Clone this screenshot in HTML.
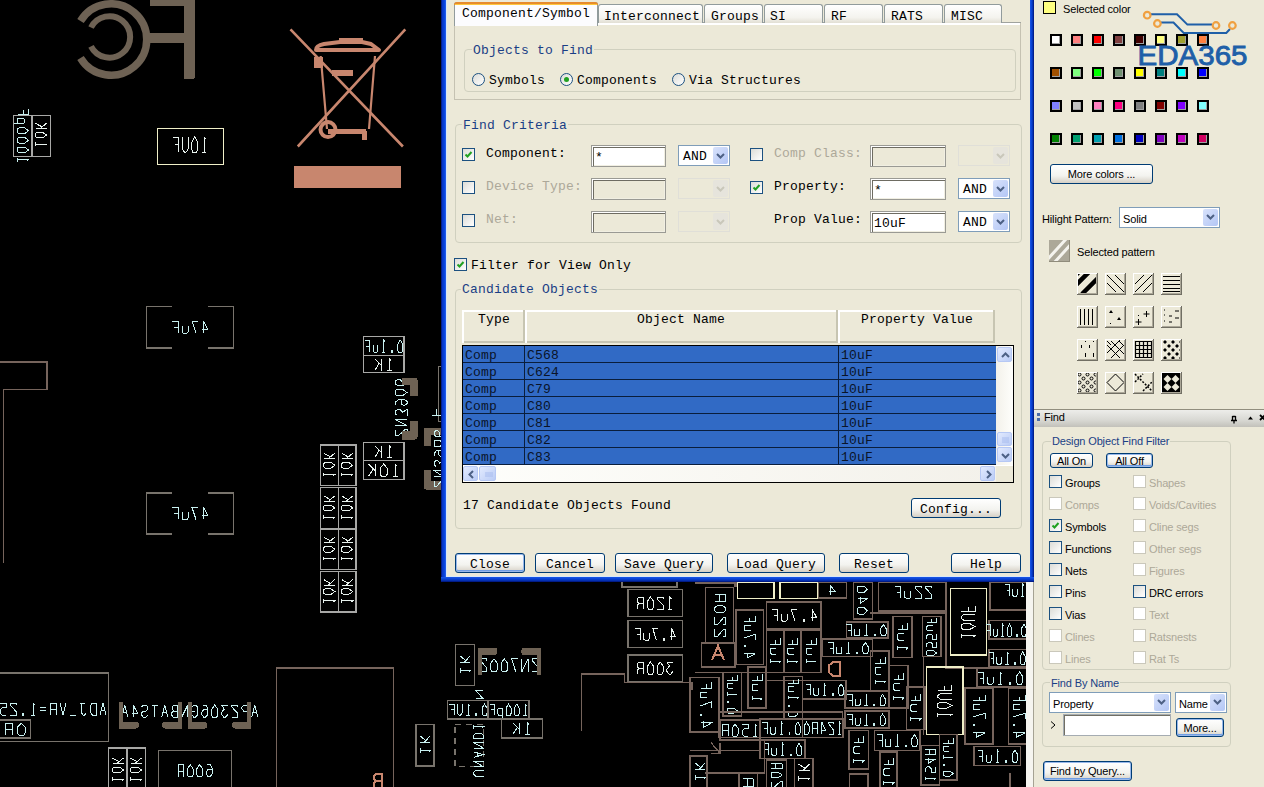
<!DOCTYPE html>
<html><head><meta charset="utf-8">
<style>
*{margin:0;padding:0;box-sizing:border-box}
html,body{width:1264px;height:787px;overflow:hidden;background:#000}
body{position:relative;font-family:"Liberation Mono",monospace}
.a{position:absolute}
#pcb{position:absolute;left:0;top:0;width:1026px;height:787px;background:#000;overflow:hidden}
#dlg{position:absolute;left:441px;top:-30px;width:593px;height:612px;background:#0A3ED6}
#dlgin{position:absolute;left:446px;top:0;width:584px;height:577px;background:#ECE9D8}
.m{font-family:"Liberation Mono",monospace;font-size:13px;color:#000;white-space:pre;line-height:13px;letter-spacing:0.2px}
.s{font-family:"Liberation Sans",sans-serif;font-size:11px;color:#000;white-space:pre;line-height:11px;letter-spacing:-0.15px;margin-top:1px}
.btn .s{margin-top:0}
.tab{position:absolute;top:4px;height:19px;border:1px solid #919B9C;border-bottom:none;border-radius:3px 3px 0 0;background:linear-gradient(#fff,#F4F3EE 70%,#E2DFD4)}
.tab span{position:absolute}
.grp{position:absolute;border:1px solid #D0D0BF;border-radius:4px}
.gt{color:#1A3E85;background:#ECE9D8;padding:0 1px}
.cb{position:absolute;width:13px;height:13px;border:1px solid #1C5180;background:linear-gradient(135deg,#DCDCD7,#fff)}
.tb{position:absolute;border:1px solid #9A9A94;background:#fff;box-shadow:inset 1px 1px 0 #fff,inset 2px 2px 0 #6E6C62,inset -1px -1px 0 #F1EFE2}
.tbd{background:#ECE9D8}
.cmb{position:absolute;border:1px solid #7F9DB9;background:#fff}
.cmbd{border-color:#E0DFD8;background:#ECE9D8}
.cmb .ar{position:absolute;right:1px;top:1px;width:15px;height:17px;background:linear-gradient(135deg,#D8E2FB,#B3C6F5);border-radius:2px}
.cmb .ard{background:#E6E4DC}
.btn{position:absolute;border:1px solid #003C74;border-radius:3px;background:linear-gradient(#fff,#F3F3EF 60%,#D6D0C5)}
.btn span{position:absolute;left:0;right:0;text-align:center}
.rad{width:13px;height:13px;border:1px solid #1C5180;border-radius:50%;background:linear-gradient(135deg,#DCDCD7,#fff)}
.rad i{position:absolute;left:3px;top:3px;width:5px;height:5px;border-radius:50%;background:#21A121}
.sbb{border-radius:2px;background:linear-gradient(135deg,#E2EAFE,#BACCF6);border:1px solid #B6C8F4}
.rt{color:#0A1428}
#panel{position:absolute;left:1034px;top:0;width:230px;height:787px;background:#ECE9D8}
.sw{position:absolute;width:12px;height:12px;border:2px solid #000}
.sw i{position:absolute;right:0;bottom:0;width:1.5px;height:100%;background:#A0A0A0}
.sw b{position:absolute;left:0;bottom:0;width:100%;height:1.5px;background:#A0A0A0}
.pat{position:absolute;width:21px;height:22px;border:1px solid;border-color:#fff #ACA899 #ACA899 #fff;box-shadow:1px 1px 0 #716F64}
.sgt{color:#1A3E85;background:#ECE9D8;padding:0 1px}
</style></head><body>
<div id="pcb"><svg width="1026" height="787" style="position:absolute;left:0;top:0" font-family="Liberation Sans" shape-rendering="crispEdges">
<g stroke="#6E6254" fill="none" shape-rendering="auto">
<path d="M80.5 21 A35.7 35.7 0 1 1 80.5 58" stroke-width="7.5"/>
<path d="M91 27.5 A20.7 20.7 0 1 1 91 46.3" stroke-width="6"/>
</g>
<g fill="#6E6254"><rect x="184" y="-2" width="11" height="81" rx="2"/><rect x="150.4" y="-2" width="42" height="8.3"/><rect x="150.4" y="32.6" width="42" height="10.3"/><circle cx="189" cy="37.7" r="5.5"/><circle cx="189" cy="2" r="5"/></g>
<g stroke="#C8866E" fill="none" shape-rendering="auto">
<path d="M290.5 29.3 L402.9 146.5 M405.3 29.3 L297.8 146.5" stroke-width="2.6"/>
<path d="M320.7 56 L327 129 M375 56 L369 129" stroke-width="2.2"/>
<path d="M328 131.5 H366" stroke-width="5"/>
<circle cx="328" cy="129.6" r="7.5" stroke-width="4"/>
<path d="M316 50 Q316 45.5 324 44 L340 42 H362 L371 44 L379 50 Z" stroke-width="4" stroke-linejoin="round"/>
</g>
<g fill="#C8866E"><rect x="338.8" y="37.8" width="24.2" height="5"/><rect x="313.5" y="57" width="9" height="11"/><rect x="331.6" y="70.4" width="21.7" height="6"/><rect x="361.8" y="131" width="5" height="9.4"/><rect x="294.2" y="165.8" width="106.7" height="21.7"/></g>
<rect x="13.7" y="115.6" width="36.599999999999994" height="41.20000000000002" stroke="#A8A8A6" stroke-width="1.3" fill="none"/>
<path d="M32 115.6 V156.8" stroke="#A8A8A6" stroke-width="1.3" fill="none"/>
<path transform="translate(23,135.5) rotate(90) scale(-1,1) translate(-27.0,-5.5)" d="M1.4 1.7L2.9 0L2.9 11M1 11L4.8 11M12.5 0L15.4 3.9L15.4 9.4L14.5 11L10.6 11L9.6 9.4L9.6 3.9ZM22.2 0L25.1 3.9L25.1 9.4L24.1 11L20.2 11L19.3 9.4L19.3 3.9ZM31.8 0L34.7 3.9L34.7 9.4L33.8 11L29.9 11L28.9 9.4L28.9 3.9ZM38.6 4.4L38.6 14.3M38.6 5.5L39.5 4.4L43.4 4.4L44.4 5.5L44.4 9.9L43.4 11L39.5 11L38.6 9.9M54 0L48.2 0L48.2 11M48.2 5.5L52.1 5.5" stroke="#C8F0F0" stroke-width="1" fill="none"/>
<path transform="translate(41,135) rotate(90) scale(-1,1) translate(-11.8,-5.5)" d="M1.4 1.7L2.7 0L2.7 11M0.9 11L4.5 11M11.8 0L14.5 3.9L14.5 9.4L13.6 11L9.9 11L9 9.4L9 3.9ZM18.1 0L18.1 11M23.5 0L18.1 6.6M19.9 4.4L23.5 11" stroke="#E8F2EE" stroke-width="1" fill="none"/>
<rect x="157.4" y="128.6" width="66.4" height="35.70000000000002" stroke="#F0EFC8" stroke-width="1.2" fill="none"/>
<path transform="translate(190,144.5) scale(-1,1) translate(-17.0,-7.5)" d="M1.4 2.2L2.8 0L2.8 15M0.9 15L4.7 15M12.3 0L15.1 5.2L15.1 12.8L14.2 15L10.4 15L9.4 12.8L9.4 5.2ZM18.9 0L18.9 12L20.8 15L22.7 15L24.6 12L24.6 0M34 0L28.3 0L28.3 15M28.3 7.5L32.1 7.5" stroke="#E8F2EE" stroke-width="1" fill="none"/>
<path d="M172 306.7 H146.7 V347.9 H172 M208 306.7 H233.4 V347.9 H208" stroke="#78736C" stroke-width="1.5" fill="none"/>
<path transform="translate(190,327.29999999999995) scale(-1,1) translate(-18.0,-6.0)" d="M4.5 12L4.5 0L0 8.4L6 8.4M10 0L16 0L12 12M20 4.8L20 10.8L21 12L25 12L26 10.8M26 4.8L26 12M36 0L30 0L30 12M30 6L34 6" stroke="#C8F0F0" stroke-width="1" fill="none"/>
<path d="M172 492.8 H146.7 V534.0 H172 M208 492.8 H233.4 V534.0 H208" stroke="#78736C" stroke-width="1.5" fill="none"/>
<path transform="translate(190,513.4) scale(-1,1) translate(-18.0,-6.0)" d="M4.5 12L4.5 0L0 8.4L6 8.4M10 0L16 0L12 12M20 4.8L20 10.8L21 12L25 12L26 10.8M26 4.8L26 12M36 0L30 0L30 12M30 6L34 6" stroke="#C8F0F0" stroke-width="1" fill="none"/>
<path d="M0 361.9 H47 V389.6 H3.6 V563" stroke="#76645C" stroke-width="1.5" fill="none"/>
<rect x="363.4" y="336.6" width="40.60000000000002" height="35.799999999999955" stroke="#A8A8A6" stroke-width="1.3" fill="none"/>
<path d="M363.4 355.8 H404" stroke="#A8A8A6" stroke-width="1.3" fill="none"/>
<path transform="translate(383.7,346) scale(-1,1) translate(-19.0,-6.0)" d="M2.5 0L5 4.2L5 10.2L4.1 12L0.8 12L0 10.2L0 4.2ZM10.3 10.8L11.2 10.8L11.2 12L10.3 12ZM17.8 1.8L19 0L19 12M17.3 12L20.7 12M24.8 4.8L24.8 10.8L25.6 12L28.9 12L29.7 10.8M29.7 4.8L29.7 12M38 0L33 0L33 12M33 6L36.3 6" stroke="#C8F0F0" stroke-width="1" fill="none"/>
<path transform="translate(383.7,364.5) scale(-1,1) translate(-9.0,-6.0)" d="M1.7 1.8L3.4 0L3.4 12M1.1 12L5.6 12M11.2 0L11.2 12M18 0L11.2 7.2M13.5 4.8L18 12" stroke="#E8F2EE" stroke-width="1" fill="none"/>
<rect x="363.4" y="442.4" width="40.60000000000002" height="36.80000000000001" stroke="#A8A8A6" stroke-width="1.3" fill="none"/>
<path d="M363.4 460.8 H404" stroke="#A8A8A6" stroke-width="1.3" fill="none"/>
<path transform="translate(383.7,451.5) scale(-1,1) translate(-9.0,-6.0)" d="M1.7 1.8L3.4 0L3.4 12M1.1 12L5.6 12M11.2 0L11.2 12M18 0L11.2 7.2M13.5 4.8L18 12" stroke="#E8F2EE" stroke-width="1" fill="none"/>
<path transform="translate(383.7,470) scale(-1,1) translate(-15.0,-6.0)" d="M1.7 1.8L3.5 0L3.5 12M1.2 12L5.8 12M15 0L18.5 4.2L18.5 10.2L17.3 12L12.7 12L11.5 10.2L11.5 4.2ZM23.1 0L23.1 12M30 0L23.1 7.2M25.4 4.8L30 12" stroke="#E8F2EE" stroke-width="1" fill="none"/>
<path transform="translate(401,407.5) rotate(90) scale(-1,1) translate(-28.0,-6.0)" d="M0 2.4L0 0L6 0L6 1.8L0 8.4L0 12L6 12M10 12L10 0L16 12L16 0M20 0L26 0L23 4.8L24 4.8L26 7.2L26 9.6L24 12L22 12L20 9.6M36 6L32 6L30 3.6L30 2.4L32 0L34 0L36 2.4L36 8.4L33 12L31 12M43 0L46 4.2L46 10.2L45 12L41 12L40 10.2L40 4.2ZM55 0L52 0L50 3.6L50 9.6L52 12L54 12L56 9.6L56 7.2L54 4.8L50 4.8" stroke="#C8F0F0" stroke-width="1" fill="none"/>
<g fill="#6E6254"><path d="M402 377.5 H415 Q417.5 377.5 417.5 380 V396 H410 V385 H402 Z"/><path d="M402 439.5 H415 Q417.5 439.5 417.5 437 V420.5 H410 V431 H402 Z"/><path d="M441 427.5 H426 Q423.5 427.5 423.5 430 V445.5 H431 V435 H441 Z"/><path d="M441 489.5 H426 Q423.5 489.5 423.5 487 V470 H431 V481 H441 Z"/></g>
<path transform="translate(438.5,458.5) rotate(90) scale(-1,1) translate(-28.0,-4.5)" d="M0 1.8L0 0L6 0L6 1.4L0 6.3L0 9L6 9M10 9L10 0L16 9L16 0M20 0L26 0L23 3.6L24 3.6L26 5.4L26 7.2L24 9L22 9L20 7.2M36 4.5L32 4.5L30 2.7L30 1.8L32 0L34 0L36 1.8L36 6.3L33 9L31 9M43 0L46 3.1L46 7.7L45 9L41 9L40 7.7L40 3.1ZM55 0L52 0L50 2.7L50 7.2L52 9L54 9L56 7.2L56 5.4L54 3.6L50 3.6" stroke="#C8F0F0" stroke-width="1" fill="none"/>
<rect x="438.7" y="366.4" width="13.300000000000011" height="54.900000000000034" stroke="#78736C" stroke-width="1.3" fill="none"/>
<path transform="translate(436.5,410.5) rotate(90) scale(-1,1) translate(-5.0,-4.5)" d="M10 0L0 0L0 9M0 4.5L6.7 4.5" stroke="#C8F0F0" stroke-width="1" fill="none"/>
<rect x="320.3" y="445" width="35.69999999999999" height="40.5" stroke="#A8A8A6" stroke-width="1.3" fill="none"/>
<path d="M338.2 445 V485.5" stroke="#A8A8A6" stroke-width="1.3" fill="none"/>
<path transform="translate(329.3,465.25) rotate(90) scale(-1,1) translate(-12.0,-5.5)" d="M1.4 1.7L2.8 0L2.8 11M0.9 11L4.6 11M12 0L14.8 3.9L14.8 9.4L13.8 11L10.2 11L9.2 9.4L9.2 3.9ZM18.5 0L18.5 11M24 0L18.5 6.6M20.3 4.4L24 11" stroke="#E8F2EE" stroke-width="1" fill="none"/>
<path transform="translate(347.2,465.25) rotate(90) scale(-1,1) translate(-12.0,-5.5)" d="M1.4 1.7L2.8 0L2.8 11M0.9 11L4.6 11M12 0L14.8 3.9L14.8 9.4L13.8 11L10.2 11L9.2 9.4L9.2 3.9ZM18.5 0L18.5 11M24 0L18.5 6.6M20.3 4.4L24 11" stroke="#E8F2EE" stroke-width="1" fill="none"/>
<rect x="320.3" y="487.7" width="35.69999999999999" height="40.50000000000006" stroke="#A8A8A6" stroke-width="1.3" fill="none"/>
<path d="M338.2 487.7 V528.2" stroke="#A8A8A6" stroke-width="1.3" fill="none"/>
<path transform="translate(329.3,507.95000000000005) rotate(90) scale(-1,1) translate(-12.0,-5.5)" d="M1.4 1.7L2.8 0L2.8 11M0.9 11L4.6 11M12 0L14.8 3.9L14.8 9.4L13.8 11L10.2 11L9.2 9.4L9.2 3.9ZM18.5 0L18.5 11M24 0L18.5 6.6M20.3 4.4L24 11" stroke="#E8F2EE" stroke-width="1" fill="none"/>
<path transform="translate(347.2,507.95000000000005) rotate(90) scale(-1,1) translate(-12.0,-5.5)" d="M1.4 1.7L2.8 0L2.8 11M0.9 11L4.6 11M12 0L14.8 3.9L14.8 9.4L13.8 11L10.2 11L9.2 9.4L9.2 3.9ZM18.5 0L18.5 11M24 0L18.5 6.6M20.3 4.4L24 11" stroke="#E8F2EE" stroke-width="1" fill="none"/>
<rect x="320.3" y="529" width="35.69999999999999" height="40.5" stroke="#A8A8A6" stroke-width="1.3" fill="none"/>
<path d="M338.2 529 V569.5" stroke="#A8A8A6" stroke-width="1.3" fill="none"/>
<path transform="translate(329.3,549.25) rotate(90) scale(-1,1) translate(-12.0,-5.5)" d="M1.4 1.7L2.8 0L2.8 11M0.9 11L4.6 11M12 0L14.8 3.9L14.8 9.4L13.8 11L10.2 11L9.2 9.4L9.2 3.9ZM18.5 0L18.5 11M24 0L18.5 6.6M20.3 4.4L24 11" stroke="#E8F2EE" stroke-width="1" fill="none"/>
<path transform="translate(347.2,549.25) rotate(90) scale(-1,1) translate(-12.0,-5.5)" d="M1.4 1.7L2.8 0L2.8 11M0.9 11L4.6 11M12 0L14.8 3.9L14.8 9.4L13.8 11L10.2 11L9.2 9.4L9.2 3.9ZM18.5 0L18.5 11M24 0L18.5 6.6M20.3 4.4L24 11" stroke="#E8F2EE" stroke-width="1" fill="none"/>
<rect x="320.3" y="571.3" width="35.69999999999999" height="40.60000000000002" stroke="#A8A8A6" stroke-width="1.3" fill="none"/>
<path d="M338.2 571.3 V611.9" stroke="#A8A8A6" stroke-width="1.3" fill="none"/>
<path transform="translate(329.3,591.5999999999999) rotate(90) scale(-1,1) translate(-12.0,-5.5)" d="M1.4 1.7L2.8 0L2.8 11M0.9 11L4.6 11M12 0L14.8 3.9L14.8 9.4L13.8 11L10.2 11L9.2 9.4L9.2 3.9ZM18.5 0L18.5 11M24 0L18.5 6.6M20.3 4.4L24 11" stroke="#E8F2EE" stroke-width="1" fill="none"/>
<path transform="translate(347.2,591.5999999999999) rotate(90) scale(-1,1) translate(-12.0,-5.5)" d="M1.4 1.7L2.8 0L2.8 11M0.9 11L4.6 11M12 0L14.8 3.9L14.8 9.4L13.8 11L10.2 11L9.2 9.4L9.2 3.9ZM18.5 0L18.5 11M24 0L18.5 6.6M20.3 4.4L24 11" stroke="#E8F2EE" stroke-width="1" fill="none"/>
<rect x="-2" y="673" width="110.6" height="68.70000000000005" stroke="#78736C" stroke-width="1.5" fill="none"/>
<path transform="translate(53,709) scale(-1,1) translate(-53.0,-6.0)" d="M0 12L3 0L6 12M1 7.8L5 7.8M10 0L10 12L13.5 12L16 9L16 3L13.5 0ZM21 0L26 0M24.5 0L24.5 9.6L23 12L21.5 12L20 10.2M30 12L36 12M40 0L43 12L46 0M50 12L50 0L55 0L56 1.2L56 5.4L55 6.6L50 6.6M55 6.6L56 7.8L56 12M60 4.2L66 4.2M60 7.8L66 7.8M71.5 1.8L73 0L73 12M71 12L75 12M82.5 10.8L83.5 10.8L83.5 12L82.5 12ZM90 2.4L90 0L96 0L96 1.8L90 8.4L90 12L96 12M106 0L100 0L100 4.8L104 4.8L106 7.2L106 9.6L104 12L100 12" stroke="#C8F0F0" stroke-width="1" fill="none"/>
<rect x="-2" y="720" width="32.3" height="18.200000000000045" stroke="#78736C" stroke-width="1.5" fill="none"/>
<path transform="translate(15,729) scale(-1,1) translate(-10.0,-6.0)" d="M3.8 0L7.5 4.2L7.5 10.2L6.2 12L1.2 12L0 10.2L0 4.2ZM12.5 12L12.5 0L18.8 0L20 1.2L20 5.4L18.8 6.6L12.5 6.6M18.8 6.6L20 7.8L20 12" stroke="#C8F0F0" stroke-width="1" fill="none"/>
<path transform="translate(189.7,711) scale(-1,1) translate(-68.0,-6.0)" d="M0 12L3 0L6 12M1 7.8L5 7.8M10 12L10 0L14 0L16 2.4L16 3.6L14 6L10 6M20 2.4L20 0L26 0L26 1.8L20 8.4L20 12L26 12M30 0L36 0L33 4.8L34 4.8L36 7.2L36 9.6L34 12L32 12L30 9.6M43 0L46 4.2L46 10.2L45 12L41 12L40 10.2L40 4.2ZM55 0L52 0L50 3.6L50 9.6L52 12L54 12L56 9.6L56 7.2L54 4.8L50 4.8M66 2.4L64 0L62 0L60 2.4L60 9.6L62 12L64 12L66 9.6L66 6L63 6M70 12L70 0L76 12L76 0M80 12L80 0L84 0L85.5 1.8L85.5 4.2L84 6L80 6M84 6L86 7.8L86 10.2L84.5 12L80 12M90 12L93 0L96 12M91 7.8L95 7.8M100 0L106 0M103 0L103 12M116 1.8L114.5 0L111.5 0L110 1.8L110 4.2L111.5 6L114.5 6L116 7.8L116 10.2L114.5 12L111.5 12L110 10.2M124.5 12L124.5 0L120 8.4L126 8.4M130 12L133 0L136 12M131 7.8L135 7.8" stroke="#C8F0F0" stroke-width="1" fill="none"/>
<g fill="#6E6254"><path d="M118.5 701.5 H122.5 V722 H136 Q139 722 139 725.2 Q139 728.5 136 728.5 H118.5 Z"/><path d="M181.5 701.5 H177.5 V722 H165 Q162 722 162 725.2 Q162 728.5 165 728.5 H181.5 Z"/><path d="M188 701.5 H192 V722 H204.5 Q207.5 722 207.5 725.2 Q207.5 728.5 204.5 728.5 H188 Z"/><path d="M251 701.5 H247 V722 H235 Q232 722 232 725.2 Q232 728.5 235 728.5 H251 Z"/></g>
<rect x="108.6" y="748" width="36.900000000000006" height="42" stroke="#A8A8A6" stroke-width="1.3" fill="none"/>
<path d="M127 748 V790" stroke="#A8A8A6" stroke-width="1.3" fill="none"/>
<path transform="translate(118,770) rotate(90) scale(-1,1) translate(-12.0,-5.5)" d="M1.4 1.7L2.8 0L2.8 11M0.9 11L4.6 11M12 0L14.8 3.9L14.8 9.4L13.8 11L10.2 11L9.2 9.4L9.2 3.9ZM18.5 0L18.5 11M24 0L18.5 6.6M20.3 4.4L24 11" stroke="#E8F2EE" stroke-width="1" fill="none"/>
<path transform="translate(136,770) rotate(90) scale(-1,1) translate(-12.0,-5.5)" d="M1.4 1.7L2.8 0L2.8 11M0.9 11L4.6 11M12 0L14.8 3.9L14.8 9.4L13.8 11L10.2 11L9.2 9.4L9.2 3.9ZM18.5 0L18.5 11M24 0L18.5 6.6M20.3 4.4L24 11" stroke="#E8F2EE" stroke-width="1" fill="none"/>
<rect x="158.4" y="750.7" width="73.1" height="39.299999999999955" stroke="#78736C" stroke-width="1.5" fill="none"/>
<path transform="translate(195,770.6) scale(-1,1) translate(-17.0,-6.0)" d="M4.7 0L1.9 0L0 3.6L0 9.6L1.9 12L3.8 12L5.7 9.6L5.7 7.2L3.8 4.8L0 4.8M12.3 0L15.1 4.2L15.1 10.2L14.2 12L10.4 12L9.4 10.2L9.4 4.2ZM21.7 0L24.6 4.2L24.6 10.2L23.6 12L19.8 12L18.9 10.2L18.9 4.2ZM28.3 12L28.3 0L33.1 0L34 1.2L34 5.4L33.1 6.6L28.3 6.6M33.1 6.6L34 7.8L34 12" stroke="#C8F0F0" stroke-width="1" fill="none"/>
<rect x="276.7" y="668" width="116.60000000000002" height="122" stroke="#76645C" stroke-width="1.5" fill="none"/>
<path transform="translate(377.5,781) scale(-1,1) translate(-4.0,-7.0)" d="M0 14L0 0L5.3 0L7.3 2.1L7.3 4.9L5.3 7L0 7M5.3 7L8 9.1L8 11.9L6 14L0 14" stroke="#C8866E" stroke-width="2" fill="none"/>
<rect x="416" y="724.3" width="18" height="41.700000000000045" stroke="#78736C" stroke-width="1.3" fill="none"/>
<path transform="translate(425,745) rotate(90) scale(-1,1) translate(-9.0,-5.0)" d="M1.7 1.5L3.4 0L3.4 10M1.1 10L5.6 10M11.2 0L11.2 10M18 0L11.2 6M13.5 4L18 10" stroke="#C8F0F0" stroke-width="1" fill="none"/>
<rect x="455.5" y="644.5" width="18.899999999999977" height="40.89999999999998" stroke="#78736C" stroke-width="1.3" fill="none"/>
<path transform="translate(465,665) rotate(90) scale(-1,1) translate(-9.0,-5.0)" d="M1.7 1.5L3.4 0L3.4 10M1.1 10L5.6 10M11.2 0L11.2 10M18 0L11.2 6M13.5 4L18 10" stroke="#C8F0F0" stroke-width="1" fill="none"/>
<path transform="translate(509.5,665.2) scale(-1,1) translate(-29.0,-6.5)" d="M0 2.6L0 0L6.2 0L6.2 2L0 9.1L0 13L6.2 13M10.4 13L10.4 0L16.6 13L16.6 0M20.7 0L26.9 0L22.8 13M34.2 0L37.3 4.5L37.3 11.1L36.2 13L32.1 13L31.1 11.1L31.1 4.5ZM44.5 0L47.6 4.5L47.6 11.1L46.6 13L42.5 13L41.4 11.1L41.4 4.5ZM51.8 2.6L51.8 0L58 0L58 2L51.8 9.1L51.8 13L58 13" stroke="#C8F0F0" stroke-width="1" fill="none"/>
<g fill="#6E6254"><path d="M478.3 674.6 H482.3 V655.3 H494 Q497.5 655.3 497.5 651.4 Q497.5 647.5 494 647.5 H478.3 Z"/><path d="M541 674.6 H537 V655.3 H524.8 Q521.3 655.3 521.3 651.4 Q521.3 647.5 524.8 647.5 H541 Z"/></g>
<path transform="translate(479,694) rotate(90) scale(-1,1) translate(-4.0,-3.5)" d="M0 7L0 0L8 7L8 0" stroke="#C8F0F0" stroke-width="1" fill="none"/>
<rect x="447.7" y="700.2" width="40.30000000000001" height="18.799999999999955" stroke="#78736C" stroke-width="1.3" fill="none"/>
<path transform="translate(468,709.6) scale(-1,1) translate(-19.0,-5.5)" d="M2.5 0L5 3.9L5 9.4L4.1 11L0.8 11L0 9.4L0 3.9ZM10.3 9.9L11.2 9.9L11.2 11L10.3 11ZM17.8 1.7L19 0L19 11M17.3 11L20.7 11M24.8 0L24.8 8.8L26.4 11L28.1 11L29.7 8.8L29.7 0M38 0L33 0L33 11M33 5.5L36.3 5.5" stroke="#C8F0F0" stroke-width="1" fill="none"/>
<rect x="488" y="700.2" width="41" height="18.799999999999955" stroke="#78736C" stroke-width="1.3" fill="none"/>
<path transform="translate(508.5,709.6) scale(-1,1) translate(-19.0,-5.5)" d="M1.2 1.7L2.5 0L2.5 11M0.8 11L4.1 11M10.7 0L13.2 3.9L13.2 9.4L12.4 11L9.1 11L8.3 9.4L8.3 3.9ZM19 0L21.5 3.9L21.5 9.4L20.7 11L17.3 11L16.5 9.4L16.5 3.9ZM24.8 4.4L24.8 14.3M24.8 5.5L25.6 4.4L28.9 4.4L29.7 5.5L29.7 9.9L28.9 11L25.6 11L24.8 9.9M38 0L33 0L33 11M33 5.5L36.3 5.5" stroke="#C8F0F0" stroke-width="1" fill="none"/>
<rect x="501.6" y="719" width="40.89999999999998" height="19" stroke="#78736C" stroke-width="1.3" fill="none"/>
<path transform="translate(522,728.5) scale(-1,1) translate(-9.0,-5.5)" d="M1.7 1.7L3.4 0L3.4 11M1.1 11L5.6 11M11.2 0L11.2 11M18 0L11.2 6.6M13.5 4.4L18 11" stroke="#C8F0F0" stroke-width="1" fill="none"/>
<rect x="455" y="724.5" width="28.3" height="41.7" stroke="#78736C" stroke-width="1.3" fill="none" stroke-dasharray="6 5"/>
<path transform="translate(478.5,750) rotate(90) scale(-1,1) translate(-26.0,-5.0)" d="M0 0L0 8L1.9 10L3.7 10L5.6 8L5.6 0M9.3 10L9.3 0L14.9 10L14.9 0M18.6 10L21.4 0L24.1 10M19.5 6.5L23.2 6.5M27.9 10L27.9 0L33.4 10L33.4 0M37.1 0L37.1 10L40.4 10L42.7 7.5L42.7 2.5L40.4 0ZM47.8 1.5L49.2 0L49.2 10M47.4 10L51.1 10" stroke="#C8F0F0" stroke-width="1" fill="none"/>
<path d="M581.6 730.7 V674 H624.7 V682.7 H692 V690" stroke="#76645C" stroke-width="1.3" fill="none"/>
<rect x="628" y="589.8" width="54.60000000000002" height="26.90000000000009" stroke="#78736C" stroke-width="1.3" fill="none"/>
<path transform="translate(655.3,603) scale(-1,1) translate(-17.5,-6.0)" d="M1.5 1.8L2.9 0L2.9 12M1 12L4.9 12M9.7 2.4L9.7 0L15.6 0L15.6 1.8L9.7 8.4L9.7 12L15.6 12M22.4 0L25.3 4.2L25.3 10.2L24.3 12L20.4 12L19.4 10.2L19.4 4.2ZM29.2 12L29.2 0L34 0L35 1.2L35 5.4L34 6.6L29.2 6.6M34 6.6L35 7.8L35 12" stroke="#E8F2EE" stroke-width="1" fill="none"/>
<rect x="628" y="620.2" width="54.60000000000002" height="27.5" stroke="#78736C" stroke-width="1.3" fill="none"/>
<path transform="translate(655.3,634) scale(-1,1) translate(-20.0,-6.0)" d="M3.9 12L3.9 0L0 8.4L5.2 8.4M10.9 10.8L11.7 10.8L11.7 12L10.9 12ZM17.4 0L22.6 0L19.1 12M26.1 4.8L26.1 10.8L27 12L30.4 12L31.3 10.8M31.3 4.8L31.3 12M40 0L34.8 0L34.8 12M34.8 6L38.3 6" stroke="#E8F2EE" stroke-width="1" fill="none"/>
<rect x="628" y="655" width="54.60000000000002" height="26.399999999999977" stroke="#78736C" stroke-width="1.3" fill="none"/>
<path transform="translate(655.3,668) scale(-1,1) translate(-17.5,-6.0)" d="M0 0L5.8 0L2.9 4.8L3.9 4.8L5.8 7.2L5.8 9.6L3.9 12L1.9 12L0 9.6M12.6 0L15.6 4.2L15.6 10.2L14.6 12L10.7 12L9.7 10.2L9.7 4.2ZM22.4 0L25.3 4.2L25.3 10.2L24.3 12L20.4 12L19.4 10.2L19.4 4.2ZM29.2 12L29.2 0L34 0L35 1.2L35 5.4L34 6.6L29.2 6.6M34 6.6L35 7.8L35 12" stroke="#E8F2EE" stroke-width="1" fill="none"/>
<rect x="622" y="580" width="55" height="7" stroke="#78736C" stroke-width="1.3" fill="none"/>
<rect x="705.6" y="587.3" width="27.899999999999977" height="55.700000000000045" stroke="#76645C" stroke-width="1.5" fill="none"/>
<path transform="translate(720,615) rotate(90) scale(-1,1) translate(-21.0,-5.5)" d="M0 2.2L0 0L7 0L7 1.7L0 7.7L0 11L7 11M11.7 2.2L11.7 0L18.7 0L18.7 1.7L11.7 7.7L11.7 11L18.7 11M26.8 0C29.2 0 30.3 1.7 30.3 4.4L30.3 6.6C30.3 9.4 29.2 11 26.8 11C24.5 11 23.3 9.4 23.3 6.6L23.3 4.4C23.3 1.7 24.5 0 26.8 0ZM35 11L35 0L40.8 0L42 1.1L42 5L40.8 6.1L35 6.1M40.8 6.1L42 7.2L42 11" stroke="#C8F0F0" stroke-width="1" fill="none"/>
<rect x="701.6" y="643" width="33.19999999999993" height="24" stroke="#76645C" stroke-width="1.5" fill="none"/>
<path transform="translate(718,653) scale(-1,1) translate(-6.0,-7.3)" d="M0 14.6L6 0L12 14.6M2 9.5L10 9.5" stroke="#C8866E" stroke-width="2" fill="none"/>
<path d="M695 582 H735 V587" stroke="#76645C" stroke-width="3" fill="none"/>
<rect x="737.5" y="582" width="36.39999999999998" height="16.700000000000045" stroke="#F0EFC8" stroke-width="1.2" fill="none"/>
<rect x="780" y="582" width="37.200000000000045" height="16.700000000000045" stroke="#F0EFC8" stroke-width="1.2" fill="none"/>
<rect x="818.5" y="582" width="27.899999999999977" height="16" stroke="#76645C" stroke-width="1.5" fill="none"/>
<path transform="translate(832,590) scale(-1,1) translate(-3.5,-4.5)" d="M5.2 9L5.2 0L0 6.3L7 6.3" stroke="#C8F0F0" stroke-width="1" fill="none"/>
<rect x="736" y="610" width="27.5" height="54.299999999999955" stroke="#76645C" stroke-width="1.5" fill="none"/>
<path transform="translate(749.5,637) rotate(90) scale(-1,1) translate(-21.0,-5.5)" d="M4.1 11L4.1 0L0 7.7L5.5 7.7M11.4 9.9L12.3 9.9L12.3 11L11.4 11ZM18.3 0L23.7 0L20.1 11M27.4 4.4L27.4 9.9L28.3 11L32 11L32.9 9.9M32.9 4.4L32.9 11M42 0L36.5 0L36.5 11M36.5 5.5L40.2 5.5" stroke="#C8F0F0" stroke-width="1" fill="none"/>
<rect x="766.7" y="602" width="54.5" height="26.5" stroke="#76645C" stroke-width="1.5" fill="none"/>
<path transform="translate(794,615) scale(-1,1) translate(-22.5,-6.0)" d="M4.4 12L4.4 0L0 8.4L5.9 8.4M12.2 10.8L13.2 10.8L13.2 12L12.2 12ZM19.6 0L25.4 0L21.5 12M29.3 4.8L29.3 10.8L30.3 12L34.2 12L35.2 10.8M35.2 4.8L35.2 12M45 0L39.1 0L39.1 12M39.1 6L43 6" stroke="#E8F2EE" stroke-width="1" fill="none"/>
<rect x="766.7" y="629.8" width="17.299999999999955" height="42.5" stroke="#76645C" stroke-width="1.5" fill="none"/>
<path transform="translate(775.35,651) rotate(90) scale(-1,1) translate(-13.0,-5.0)" d="M1.5 1.5L3 0L3 10M1 10L5 10M10 4L10 9L11 10L15 10L16 9M16 4L16 10M26 0L20 0L20 10M20 5L24 5" stroke="#C8F0F0" stroke-width="1" fill="none"/>
<rect x="784" y="629.8" width="17.200000000000045" height="42.5" stroke="#76645C" stroke-width="1.5" fill="none"/>
<path transform="translate(792.6,651) rotate(90) scale(-1,1) translate(-13.0,-5.0)" d="M1.5 1.5L3 0L3 10M1 10L5 10M10 4L10 9L11 10L15 10L16 9M16 4L16 10M26 0L20 0L20 10M20 5L24 5" stroke="#C8F0F0" stroke-width="1" fill="none"/>
<rect x="801.2" y="629.8" width="20.0" height="42.5" stroke="#76645C" stroke-width="1.5" fill="none"/>
<path transform="translate(811.2,651) rotate(90) scale(-1,1) translate(-13.0,-5.0)" d="M1.5 1.5L3 0L3 10M1 10L5 10M10 4L10 9L11 10L15 10L16 9M16 4L16 10M26 0L20 0L20 10M20 5L24 5" stroke="#C8F0F0" stroke-width="1" fill="none"/>
<rect x="846.4" y="621.8" width="41.60000000000002" height="16.0" stroke="#76645C" stroke-width="1.5" fill="none"/>
<path transform="translate(866,630) scale(-1,1) translate(-20.0,-5.5)" d="M2.6 0L5.2 3.9L5.2 9.4L4.3 11L0.9 11L0 9.4L0 3.9ZM10.9 9.9L11.7 9.9L11.7 11L10.9 11ZM18.7 1.7L20 0L20 11M18.3 11L21.7 11M26.1 4.4L26.1 9.9L27 11L30.4 11L31.3 9.9M31.3 4.4L31.3 11M40 0L34.8 0L34.8 11M34.8 5.5L38.3 5.5" stroke="#C8F0F0" stroke-width="1" fill="none"/>
<rect x="822.5" y="639" width="49.89999999999998" height="17.399999999999977" stroke="#76645C" stroke-width="1.5" fill="none"/>
<path transform="translate(848,648) scale(-1,1) translate(-20.0,-5.5)" d="M2.6 0L5.2 3.9L5.2 9.4L4.3 11L0.9 11L0 9.4L0 3.9ZM10.9 9.9L11.7 9.9L11.7 11L10.9 11ZM18.7 1.7L20 0L20 11M18.3 11L21.7 11M26.1 4.4L26.1 9.9L27 11L30.4 11L31.3 9.9M31.3 4.4L31.3 11M40 0L34.8 0L34.8 11M34.8 5.5L38.3 5.5" stroke="#C8F0F0" stroke-width="1" fill="none"/>
<path transform="translate(834.5,669) scale(-1,1) translate(-5.5,-7.3)" d="M0 0L0 14.6L6.4 14.6L11 10.9L11 3.6L6.4 0Z" stroke="#C8866E" stroke-width="2" fill="none"/>
<rect x="748" y="667" width="18" height="41" stroke="#76645C" stroke-width="1.5" fill="none"/>
<path transform="translate(757,687.5) rotate(90) scale(-1,1) translate(-14.0,-5.0)" d="M1.6 1.5L3.2 0L3.2 10M1.1 10L5.4 10M10.8 4L10.8 9L11.8 10L16.2 10L17.2 9M17.2 4L17.2 10M28 0L21.5 0L21.5 10M21.5 5L25.8 5" stroke="#C8F0F0" stroke-width="1" fill="none"/>
<path d="M695 672.3 H766 M766 680.3 H846 V698" stroke="#76645C" stroke-width="1.5" fill="none"/>
<rect x="784" y="676.3" width="18.600000000000023" height="42.5" stroke="#76645C" stroke-width="1.5" fill="none"/>
<path transform="translate(793.3,697.5) rotate(90) scale(-1,1) translate(-19.0,-5.0)" d="M2.5 0L5 3.5L5 8.5L4.1 10L0.8 10L0 8.5L0 3.5ZM10.3 9L11.2 9L11.2 10L10.3 10ZM17.8 1.5L19 0L19 10M17.3 10L20.7 10M24.8 4L24.8 9L25.6 10L28.9 10L29.7 9M29.7 4L29.7 10M38 0L33 0L33 10M33 5L36.3 5" stroke="#C8F0F0" stroke-width="1" fill="none"/>
<rect x="802.6" y="680.3" width="43.799999999999955" height="18.5" stroke="#76645C" stroke-width="1.5" fill="none"/>
<path transform="translate(824.5,689.5) scale(-1,1) translate(-19.0,-5.5)" d="M2.5 0L5 3.9L5 9.4L4.1 11L0.8 11L0 9.4L0 3.9ZM10.3 9.9L11.2 9.9L11.2 11L10.3 11ZM17.8 1.7L19 0L19 11M17.3 11L20.7 11M24.8 4.4L24.8 9.9L25.6 11L28.9 11L29.7 9.9M29.7 4.4L29.7 11M38 0L33 0L33 11M33 5.5L36.3 5.5" stroke="#C8F0F0" stroke-width="1" fill="none"/>
<rect x="690" y="677.6" width="29" height="54.39999999999998" stroke="#76645C" stroke-width="1.5" fill="none"/>
<path transform="translate(706,704.8) rotate(90) scale(-1,1) translate(-22.5,-5.5)" d="M4.4 11L4.4 0L0 7.7L5.9 7.7M12.2 9.9L13.2 9.9L13.2 11L12.2 11ZM19.6 0L25.4 0L21.5 11M29.3 4.4L29.3 9.9L30.3 11L34.2 11L35.2 9.9M35.2 4.4L35.2 11M45 0L39.1 0L39.1 11M39.1 5.5L43 5.5" stroke="#C8F0F0" stroke-width="1" fill="none"/>
<rect x="723" y="672.3" width="18.5" height="43.700000000000045" stroke="#76645C" stroke-width="1.5" fill="none"/>
<path transform="translate(732,694) rotate(90) scale(-1,1) translate(-19.0,-5.0)" d="M2.5 0L5 3.5L5 8.5L4.1 10L0.8 10L0 8.5L0 3.5ZM10.3 9L11.2 9L11.2 10L10.3 10ZM17.8 1.5L19 0L19 10M17.3 10L20.7 10M24.8 4L24.8 9L25.6 10L28.9 10L29.7 9M29.7 4L29.7 10M38 0L33 0L33 10M33 5L36.3 5" stroke="#C8F0F0" stroke-width="1" fill="none"/>
<rect x="719" y="712" width="123.39999999999998" height="25.399999999999977" stroke="#76645C" stroke-width="1.5" fill="none"/>
<rect x="720" y="720" width="40" height="20" stroke="#76645C" stroke-width="1.5" fill="none"/>
<path transform="translate(740,730) scale(-1,1) translate(-18.0,-6.0)" d="M1.5 1.8L3 0L3 12M1 12L5 12M16 0L10 0L10 4.8L14 4.8L16 7.2L16 9.6L14 12L10 12M23 0L26 4.2L26 10.2L25 12L21 12L20 10.2L20 4.2ZM30 12L30 0L35 0L36 1.2L36 5.4L35 6.6L30 6.6M35 6.6L36 7.8L36 12" stroke="#C8F0F0" stroke-width="1" fill="none"/>
<rect x="760" y="718.8" width="42.60000000000002" height="18.600000000000023" stroke="#76645C" stroke-width="1.5" fill="none"/>
<path transform="translate(781.3,728) scale(-1,1) translate(-19.0,-6.0)" d="M2.5 0L5 4.2L5 10.2L4.1 12L0.8 12L0 10.2L0 4.2ZM10.3 10.8L11.2 10.8L11.2 12L10.3 12ZM17.8 1.8L19 0L19 12M17.3 12L20.7 12M24.8 4.8L24.8 10.8L25.6 12L28.9 12L29.7 10.8M29.7 4.8L29.7 12M38 0L33 0L33 12M33 6L36.3 6" stroke="#C8F0F0" stroke-width="1" fill="none"/>
<rect x="802.6" y="718.8" width="41.10000000000002" height="18.600000000000023" stroke="#76645C" stroke-width="1.5" fill="none"/>
<path transform="translate(823,728) scale(-1,1) translate(-19.0,-6.0)" d="M1.2 1.8L2.5 0L2.5 12M0.8 12L4.1 12M8.3 2.4L8.3 0L13.2 0L13.2 1.8L8.3 8.4L8.3 12L13.2 12M20.2 12L20.2 0L16.5 8.4L21.5 8.4M24.8 12L24.8 0L28.9 0L29.7 1.2L29.7 5.4L28.9 6.6L24.8 6.6M28.9 6.6L29.7 7.8L29.7 12M35.5 0L38 4.2L38 10.2L37.2 12L33.9 12L33 10.2L33 4.2Z" stroke="#C8F0F0" stroke-width="1" fill="none"/>
<rect x="760" y="740" width="45.200000000000045" height="18.600000000000023" stroke="#76645C" stroke-width="1.5" fill="none"/>
<path transform="translate(782.6,749.3) scale(-1,1) translate(-19.0,-6.0)" d="M2.5 0L5 4.2L5 10.2L4.1 12L0.8 12L0 10.2L0 4.2ZM10.3 10.8L11.2 10.8L11.2 12L10.3 12ZM17.8 1.8L19 0L19 12M17.3 12L20.7 12M24.8 4.8L24.8 10.8L25.6 12L28.9 12L29.7 10.8M29.7 4.8L29.7 12M38 0L33 0L33 12M33 6L36.3 6" stroke="#C8F0F0" stroke-width="1" fill="none"/>
<path d="M711 742.7 L720 753.3 M711 753.3 H720 V742.7" stroke="#76645C" stroke-width="1.3" fill="none"/>
<path d="M690 750.6 H760 M705 773 H764.6 V740" stroke="#76645C" stroke-width="1.5" fill="none"/>
<rect x="766.7" y="760" width="19.899999999999977" height="32" stroke="#76645C" stroke-width="1.5" fill="none"/>
<path transform="translate(776.6,775) rotate(90) scale(-1,1) translate(-12.0,-5.5)" d="M0 2.2L0 0L5.5 0L5.5 1.7L0 7.7L0 11L5.5 11M12 0L14.8 3.9L14.8 9.4L13.8 11L10.2 11L9.2 9.4L9.2 3.9ZM18.5 11L18.5 0L23.1 0L24 1.1L24 5L23.1 6.1L18.5 6.1M23.1 6.1L24 7.2L24 11" stroke="#C8F0F0" stroke-width="1" fill="none"/>
<rect x="794.6" y="758.6" width="18.600000000000023" height="33.39999999999998" stroke="#76645C" stroke-width="1.5" fill="none"/>
<path transform="translate(804,773) rotate(90) scale(-1,1) translate(-9.0,-5.5)" d="M1.7 1.7L3.4 0L3.4 11M1.1 11L5.6 11M11.2 0L11.2 11M18 0L11.2 6.6M13.5 4.4L18 11" stroke="#E8F2EE" stroke-width="1" fill="none"/>
<rect x="738.8" y="773" width="18.600000000000023" height="19" stroke="#76645C" stroke-width="1.5" fill="none"/>
<path transform="translate(748,782) rotate(90) scale(-1,1) translate(-4.0,-5.5)" d="M0 11L0 0L6.7 0L8 1.1L8 5L6.7 6.1L0 6.1M6.7 6.1L8 7.2L8 11" stroke="#C8F0F0" stroke-width="1" fill="none"/>
<rect x="690" y="756" width="17" height="36" stroke="#76645C" stroke-width="1.5" fill="none"/>
<path transform="translate(700,772) rotate(90) scale(-1,1) translate(-9.0,-5.0)" d="M1.7 1.5L3.4 0L3.4 10M1.1 10L5.6 10M11.2 0L11.2 10M18 0L11.2 6M13.5 4L18 10" stroke="#C8F0F0" stroke-width="1" fill="none"/>
<rect x="849" y="730.7" width="19.299999999999955" height="38.299999999999955" stroke="#76645C" stroke-width="1.5" fill="none"/>
<path transform="translate(858.6,750) rotate(90) scale(-1,1) translate(-14.0,-5.0)" d="M1.6 1.5L3.2 0L3.2 10M1.1 10L5.4 10M10.8 4L10.8 9L11.8 10L16.2 10L17.2 9M17.2 4L17.2 10M28 0L21.5 0L21.5 10M21.5 5L25.8 5" stroke="#C8F0F0" stroke-width="1" fill="none"/>
<rect x="845" y="691" width="44.200000000000045" height="17" stroke="#76645C" stroke-width="1.5" fill="none"/>
<path transform="translate(866,700) scale(-1,1) translate(-19.0,-5.5)" d="M2.5 0L5 3.9L5 9.4L4.1 11L0.8 11L0 9.4L0 3.9ZM10.3 9.9L11.2 9.9L11.2 11L10.3 11ZM17.8 1.7L19 0L19 11M17.3 11L20.7 11M24.8 4.4L24.8 9.9L25.6 11L28.9 11L29.7 9.9M29.7 4.4L29.7 11M38 0L33 0L33 11M33 5.5L36.3 5.5" stroke="#C8F0F0" stroke-width="1" fill="none"/>
<rect x="845" y="711" width="44.200000000000045" height="17" stroke="#76645C" stroke-width="1.5" fill="none"/>
<path transform="translate(866,719.5) scale(-1,1) translate(-19.0,-5.5)" d="M2.5 0L5 3.9L5 9.4L4.1 11L0.8 11L0 9.4L0 3.9ZM10.3 9.9L11.2 9.9L11.2 11L10.3 11ZM17.8 1.7L19 0L19 11M17.3 11L20.7 11M24.8 4.4L24.8 9.9L25.6 11L28.9 11L29.7 9.9M29.7 4.4L29.7 11M38 0L33 0L33 11M33 5.5L36.3 5.5" stroke="#C8F0F0" stroke-width="1" fill="none"/>
<rect x="849.5" y="774" width="18.5" height="18" stroke="#76645C" stroke-width="1.5" fill="none"/>
<rect x="853.5" y="582" width="18.899999999999977" height="37.200000000000045" stroke="#76645C" stroke-width="1.5" fill="none"/>
<path transform="translate(862.5,600) rotate(90) scale(-1,1) translate(-14.0,-5.0)" d="M3.2 0L6.5 3.5L6.5 8.5L5.4 10L1.1 10L0 8.5L0 3.5ZM15.6 10L15.6 0L10.8 7L17.2 7M24.8 0L28 3.5L28 8.5L26.9 10L22.6 10L21.5 8.5L21.5 3.5Z" stroke="#C8F0F0" stroke-width="1" fill="none"/>
<rect x="878.6" y="582" width="67.69999999999993" height="29.200000000000045" stroke="#76645C" stroke-width="1.5" fill="none"/>
<path transform="translate(913,592) scale(-1,1) translate(-18.5,-6.0)" d="M0 2.4L0 0L6.2 0L6.2 1.8L0 8.4L0 12L6.2 12M10.3 2.4L10.3 0L16.4 0L16.4 1.8L10.3 8.4L10.3 12L16.4 12M20.6 4.8L20.6 10.8L21.6 12L25.7 12L26.7 10.8M26.7 4.8L26.7 12M37 0L30.8 0L30.8 12M30.8 6L34.9 6" stroke="#C8F0F0" stroke-width="1" fill="none"/>
<path d="M870 613 H946.3 M946.3 582 V668.3 H1026" stroke="#76645C" stroke-width="2" fill="none"/>
<rect x="893.2" y="616.5" width="18.59999999999991" height="41.200000000000045" stroke="#76645C" stroke-width="1.5" fill="none"/>
<path transform="translate(902.5,637) rotate(90) scale(-1,1) translate(-14.0,-5.0)" d="M1.6 1.5L3.2 0L3.2 10M1.1 10L5.4 10M10.8 4L10.8 9L11.8 10L16.2 10L17.2 9M17.2 4L17.2 10M28 0L21.5 0L21.5 10M21.5 5L25.8 5" stroke="#C8F0F0" stroke-width="1" fill="none"/>
<rect x="922.4" y="616.5" width="18.600000000000023" height="39.89999999999998" stroke="#76645C" stroke-width="1.5" fill="none"/>
<path transform="translate(931.7,636.5) rotate(90) scale(-1,1) translate(-19.0,-5.0)" d="M2.5 0L5 3.5L5 8.5L4.1 10L0.8 10L0 8.5L0 3.5ZM13.2 0L8.3 0L8.3 4L11.6 4L13.2 6L13.2 8L11.6 10L8.3 10M21.5 0L16.5 0L16.5 4L19.8 4L21.5 6L21.5 8L19.8 10L16.5 10M24.8 4L24.8 9L25.6 10L28.9 10L29.7 9M29.7 4L29.7 10M38 0L33 0L33 10M33 5L36.3 5" stroke="#C8F0F0" stroke-width="1" fill="none"/>
<rect x="950.3" y="588.6" width="35.90000000000009" height="66.39999999999998" stroke="#F0EFC8" stroke-width="1.2" fill="none"/>
<path transform="translate(968,622) rotate(90) scale(-1,1) translate(-16.5,-7.0)" d="M1.4 2.1L2.8 0L2.8 14M0.9 14L4.6 14M11.9 0L14.7 4.9L14.7 11.9L13.8 14L10.1 14L9.2 11.9L9.2 4.9ZM18.3 0L18.3 11.2L20.2 14L22 14L23.8 11.2L23.8 0M33 0L27.5 0L27.5 14M27.5 7L31.2 7" stroke="#E8F2EE" stroke-width="1" fill="none"/>
<rect x="988.8" y="620.5" width="41.200000000000045" height="18.5" stroke="#76645C" stroke-width="1.5" fill="none"/>
<path transform="translate(1006,630) scale(-1,1) translate(-20.0,-6.0)" d="M2.1 0L4.3 4.2L4.3 10.2L3.6 12L0.7 12L0 10.2L0 4.2ZM8.9 10.8L9.6 10.8L9.6 12L8.9 12ZM16.4 0L18.6 4.2L18.6 10.2L17.9 12L15 12L14.3 10.2L14.3 4.2ZM22.5 1.8L23.6 0L23.6 12M22.1 12L25 12M28.6 4.8L28.6 10.8L29.3 12L32.1 12L32.9 10.8M32.9 4.8L32.9 12M40 0L35.7 0L35.7 12M35.7 6L38.6 6" stroke="#C8F0F0" stroke-width="1" fill="none"/>
<rect x="990" y="582" width="40" height="28" stroke="#76645C" stroke-width="1.5" fill="none"/>
<path transform="translate(1015,590) scale(-1,1) translate(-10.0,-6.0)" d="M1.2 1.8L2.3 0L2.3 12M0.8 12L3.8 12M7.7 4.8L7.7 10.8L8.5 12L11.5 12L12.3 10.8M12.3 4.8L12.3 12M20 0L15.4 0L15.4 12M15.4 6L18.5 6" stroke="#C8F0F0" stroke-width="1" fill="none"/>
<rect x="988.8" y="649.7" width="41.200000000000045" height="17.299999999999955" stroke="#76645C" stroke-width="1.5" fill="none"/>
<path transform="translate(1007,658) scale(-1,1) translate(-18.0,-6.0)" d="M2.3 0L4.7 4.2L4.7 10.2L3.9 12L0.8 12L0 10.2L0 4.2ZM9.8 10.8L10.6 10.8L10.6 12L9.8 12ZM16.8 1.8L18 0L18 12M16.4 12L19.6 12M23.5 4.8L23.5 10.8L24.3 12L27.4 12L28.2 10.8M28.2 4.8L28.2 12M36 0L31.3 0L31.3 12M31.3 6L34.4 6" stroke="#C8F0F0" stroke-width="1" fill="none"/>
<rect x="976.9" y="668.3" width="53.10000000000002" height="18.700000000000045" stroke="#76645C" stroke-width="1.5" fill="none"/>
<path transform="translate(1000,678) scale(-1,1) translate(-22.5,-6.0)" d="M2.9 0L5.9 4.2L5.9 10.2L4.9 12L1 12L0 10.2L0 4.2ZM12.2 10.8L13.2 10.8L13.2 12L12.2 12ZM21 1.8L22.5 0L22.5 12M20.5 12L24.5 12M29.3 4.8L29.3 10.8L30.3 12L34.2 12L35.2 10.8M35.2 4.8L35.2 12M45 0L39.1 0L39.1 12M39.1 6L43 6" stroke="#C8F0F0" stroke-width="1" fill="none"/>
<rect x="870.6" y="651" width="18.600000000000023" height="39.89999999999998" stroke="#76645C" stroke-width="1.5" fill="none"/>
<path transform="translate(880,671) rotate(90) scale(-1,1) translate(-14.0,-5.0)" d="M1.6 1.5L3.2 0L3.2 10M1.1 10L5.4 10M10.8 4L10.8 9L11.8 10L16.2 10L17.2 9M17.2 4L17.2 10M28 0L21.5 0L21.5 10M21.5 5L25.8 5" stroke="#C8F0F0" stroke-width="1" fill="none"/>
<rect x="889.2" y="665.6" width="18.59999999999991" height="42.39999999999998" stroke="#76645C" stroke-width="1.5" fill="none"/>
<path transform="translate(898.5,687) rotate(90) scale(-1,1) translate(-14.0,-5.0)" d="M1.6 1.5L3.2 0L3.2 10M1.1 10L5.4 10M10.8 4L10.8 9L11.8 10L16.2 10L17.2 9M17.2 4L17.2 10M28 0L21.5 0L21.5 10M21.5 5L25.8 5" stroke="#C8F0F0" stroke-width="1" fill="none"/>
<path d="M923.7 656 V734.7" stroke="#76645C" stroke-width="1.5" fill="none"/>
<rect x="926.4" y="667" width="36.60000000000002" height="67.70000000000005" stroke="#F0EFC8" stroke-width="1.2" fill="none"/>
<path transform="translate(944.7,701) rotate(90) scale(-1,1) translate(-16.5,-7.0)" d="M1.4 2.1L2.8 0L2.8 14M0.9 14L4.6 14M11.9 0L14.7 4.9L14.7 11.9L13.8 14L10.1 14L9.2 11.9L9.2 4.9ZM18.3 0L18.3 11.2L20.2 14L22 14L23.8 11.2L23.8 0M33 0L27.5 0L27.5 14M27.5 7L31.2 7" stroke="#E8F2EE" stroke-width="1" fill="none"/>
<rect x="906.5" y="687" width="18.5" height="42.39999999999998" stroke="#76645C" stroke-width="1.5" fill="none"/>
<path transform="translate(915.7,708) rotate(90) scale(-1,1) translate(-14.0,-5.0)" d="M1.6 1.5L3.2 0L3.2 10M1.1 10L5.4 10M10.8 4L10.8 9L11.8 10L16.2 10L17.2 9M17.2 4L17.2 10M28 0L21.5 0L21.5 10M21.5 5L25.8 5" stroke="#C8F0F0" stroke-width="1" fill="none"/>
<rect x="965" y="688.2" width="27.799999999999955" height="55.799999999999955" stroke="#76645C" stroke-width="1.5" fill="none"/>
<path transform="translate(979,716) rotate(90) scale(-1,1) translate(-21.0,-6.0)" d="M4.1 12L4.1 0L0 8.4L5.5 8.4M11.4 10.8L12.3 10.8L12.3 12L11.4 12ZM18.3 0L23.7 0L20.1 12M27.4 4.8L27.4 10.8L28.3 12L32 12L32.9 10.8M32.9 4.8L32.9 12M42 0L36.5 0L36.5 12M36.5 6L40.2 6" stroke="#C8F0F0" stroke-width="1" fill="none"/>
<rect x="1008.7" y="688.2" width="21.299999999999955" height="55.799999999999955" stroke="#76645C" stroke-width="1.5" fill="none"/>
<path transform="translate(1019,716) rotate(90) scale(-1,1) translate(-21.0,-6.0)" d="M4.1 12L4.1 0L0 8.4L5.5 8.4M11.4 10.8L12.3 10.8L12.3 12L11.4 12ZM18.3 0L23.7 0L20.1 12M27.4 4.8L27.4 10.8L28.3 12L32 12L32.9 10.8M32.9 4.8L32.9 12M42 0L36.5 0L36.5 12M36.5 6L40.2 6" stroke="#C8F0F0" stroke-width="1" fill="none"/>
<rect x="874.6" y="730.7" width="45.19999999999993" height="19.899999999999977" stroke="#76645C" stroke-width="1.5" fill="none"/>
<path transform="translate(897,740.6) scale(-1,1) translate(-20.0,-6.0)" d="M2.6 0L5.2 4.2L5.2 10.2L4.3 12L0.9 12L0 10.2L0 4.2ZM10.9 10.8L11.7 10.8L11.7 12L10.9 12ZM18.7 1.8L20 0L20 12M18.3 12L21.7 12M26.1 4.8L26.1 10.8L27 12L30.4 12L31.3 10.8M31.3 4.8L31.3 12M40 0L34.8 0L34.8 12M34.8 6L38.3 6" stroke="#C8F0F0" stroke-width="1" fill="none"/>
<rect x="921" y="745.3" width="18.700000000000045" height="39.90000000000009" stroke="#76645C" stroke-width="1.5" fill="none"/>
<path transform="translate(930.3,765) rotate(90) scale(-1,1) translate(-16.0,-5.0)" d="M1.3 1.5L2.7 0L2.7 10M0.9 10L4.4 10M14.2 0L8.9 0L8.9 4L12.4 4L14.2 6L14.2 8L12.4 10L8.9 10M21.8 10L21.8 0L17.8 7L23.1 7M26.7 10L26.7 0L31.1 0L32 1L32 4.5L31.1 5.5L26.7 5.5M31.1 5.5L32 6.5L32 10" stroke="#C8F0F0" stroke-width="1" fill="none"/>
<rect x="939.7" y="734.7" width="17.299999999999955" height="45.299999999999955" stroke="#76645C" stroke-width="1.5" fill="none"/>
<path transform="translate(948.3,757) rotate(90) scale(-1,1) translate(-19.0,-5.0)" d="M2.5 0L5 3.5L5 8.5L4.1 10L0.8 10L0 8.5L0 3.5ZM10.3 9L11.2 9L11.2 10L10.3 10ZM17.8 1.5L19 0L19 10M17.3 10L20.7 10M24.8 4L24.8 9L25.6 10L28.9 10L29.7 9M29.7 4L29.7 10M38 0L33 0L33 10M33 5L36.3 5" stroke="#C8F0F0" stroke-width="1" fill="none"/>
<rect x="974.2" y="746.7" width="46.5" height="18.59999999999991" stroke="#76645C" stroke-width="1.5" fill="none"/>
<path transform="translate(997.5,756) scale(-1,1) translate(-20.0,-6.0)" d="M2.6 0L5.2 4.2L5.2 10.2L4.3 12L0.9 12L0 10.2L0 4.2ZM10.9 10.8L11.7 10.8L11.7 12L10.9 12ZM18.7 1.8L20 0L20 12M18.3 12L21.7 12M26.1 4.8L26.1 10.8L27 12L30.4 12L31.3 10.8M31.3 4.8L31.3 12M40 0L34.8 0L34.8 12M34.8 6L38.3 6" stroke="#C8F0F0" stroke-width="1" fill="none"/>
<rect x="880" y="752" width="17.200000000000045" height="40" stroke="#76645C" stroke-width="1.5" fill="none"/>
<path transform="translate(888.6,772) rotate(90) scale(-1,1) translate(-14.0,-5.0)" d="M1.6 1.5L3.2 0L3.2 10M1.1 10L5.4 10M10.8 4L10.8 9L11.8 10L16.2 10L17.2 9M17.2 4L17.2 10M28 0L21.5 0L21.5 10M21.5 5L25.8 5" stroke="#C8F0F0" stroke-width="1" fill="none"/>
<path d="M1010 773 V787" stroke="#76645C" stroke-width="1.5" fill="none"/>
</svg></div>
<div class="a" style="left:1026px;top:581px;width:8px;height:206px;background:#F6F5F0"></div>
<div class="a" style="left:1033px;top:581px;width:1px;height:206px;background:#A5A293"></div>
<div id="dlg"></div>
<div id="dlgin"></div>
<div class="a" style="left:441px;top:0;width:5px;height:582px;background:linear-gradient(90deg,#001272,#0736C4 30%,#0A46E0 70%,#2A62EE)"></div>
<div class="a" style="left:1030px;top:0;width:4px;height:582px;background:linear-gradient(90deg,#1A56E8,#0842D4 40%,#0530B0 70%,#001272)"></div>
<div class="a" style="left:441px;top:577px;width:593px;height:5px;background:linear-gradient(180deg,#1A56E8,#0842D4 40%,#0530B0 70%,#001272)"></div>
<div class="a" style="left:446px;top:0;width:1px;height:577px;background:#D8E8F8"></div>
<div class="a" style="left:446px;top:576px;width:584px;height:1px;background:#D8E8F8"></div>
<!-- tabs -->
<div class="a" style="left:454px;top:22px;width:567px;height:78px;border:1px solid #C5C2B2;border-top:none;background:#ECE9D8"></div>
<div class="a" style="left:454px;top:22px;width:567px;height:1px;background:#A0A39E"></div>
<div class="a" style="left:455px;top:23px;width:565px;height:2px;background:#fff"></div>
<div class="tab" style="left:598px;width:105px"><span class="m" style="left:5px;top:5px">Interconnect</span></div>
<div class="tab" style="left:704px;width:59px"><span class="m" style="left:6px;top:5px">Groups</span></div>
<div class="tab" style="left:764px;width:59px"><span class="m" style="left:5px;top:5px">SI</span></div>
<div class="tab" style="left:824px;width:59px"><span class="m" style="left:6px;top:5px">RF</span></div>
<div class="tab" style="left:884px;width:59px"><span class="m" style="left:6px;top:5px">RATS</span></div>
<div class="tab" style="left:944px;width:58px"><span class="m" style="left:6px;top:5px">MISC</span></div>
<div class="a" style="left:454px;top:2px;width:144px;height:24px;border:1px solid #919B9C;border-bottom:none;border-radius:3px 3px 0 0;background:#FCFCFE"></div>
<div class="a" style="left:454px;top:2px;width:144px;height:3px;background:#E68B2C;border-radius:3px 3px 0 0"></div>
<div class="a" style="left:455px;top:4px;width:142px;height:1px;background:#FFC73C"></div>
<span class="m a" style="left:462px;top:7px">Component/Symbol</span>

<!-- objects to find -->
<div class="grp" style="left:464px;top:49px;width:552px;height:43px"></div>
<span class="m gt a" style="left:472px;top:44px">Objects to Find</span>
<div class="a rad" style="left:472px;top:73px"></div>
<span class="m a" style="left:489px;top:74px">Symbols</span>
<div class="a rad" style="left:560px;top:73px"><i></i></div>
<span class="m a" style="left:577px;top:74px">Components</span>
<div class="a rad" style="left:672px;top:73px"></div>
<span class="m a" style="left:689px;top:74px">Via Structures</span>

<!-- find criteria -->
<div class="grp" style="left:455px;top:124px;width:567px;height:119px"></div>
<span class="m gt a" style="left:462px;top:119px">Find Criteria</span>
<div class="cb" style="left:462px;top:148px"><svg width="11" height="11" style="position:absolute;left:0;top:0"><path d="M2.5 5.5 L4.5 7.5 L8.5 3" stroke="#21A121" stroke-width="2" fill="none"/></svg></div>
<span class="m a" style="left:486px;top:147px">Component:</span>
<div class="tb" style="left:591px;top:145px;width:75px;height:22px"><span class="m a" style="left:3px;top:5px">*</span></div>
<div class="cmb" style="left:678px;top:145px;width:52px;height:21px"><span class="m a" style="left:4px;top:4px">AND</span><div class="ar"><svg width="15" height="19"><path d="M4 7 L7.5 10.5 L11 7" stroke="#4D6185" stroke-width="2" fill="none"/></svg></div></div>
<div class="cb" style="left:462px;top:181px"></div>
<span class="m a" style="left:486px;top:180px;color:#ACA899">Device Type:</span>
<div class="tb tbd" style="left:591px;top:178px;width:75px;height:22px"></div>
<div class="cmb cmbd" style="left:678px;top:178px;width:52px;height:21px"><div class="ar ard"><svg width="15" height="19"><path d="M4 7 L7.5 10.5 L11 7" stroke="#C9C7BA" stroke-width="2" fill="none"/></svg></div></div>
<div class="cb" style="left:462px;top:214px"></div>
<span class="m a" style="left:486px;top:213px;color:#ACA899">Net:</span>
<div class="tb tbd" style="left:591px;top:211px;width:75px;height:22px"></div>
<div class="cmb cmbd" style="left:678px;top:211px;width:52px;height:21px"><div class="ar ard"><svg width="15" height="19"><path d="M4 7 L7.5 10.5 L11 7" stroke="#C9C7BA" stroke-width="2" fill="none"/></svg></div></div>

<div class="cb" style="left:750px;top:148px"></div>
<span class="m a" style="left:774px;top:147px;color:#ACA899">Comp Class:</span>
<div class="tb tbd" style="left:870px;top:145px;width:76px;height:22px"></div>
<div class="cmb cmbd" style="left:958px;top:145px;width:52px;height:21px"><div class="ar ard"><svg width="15" height="19"><path d="M4 7 L7.5 10.5 L11 7" stroke="#C9C7BA" stroke-width="2" fill="none"/></svg></div></div>
<div class="cb" style="left:750px;top:181px"><svg width="11" height="11" style="position:absolute;left:0;top:0"><path d="M2.5 5.5 L4.5 7.5 L8.5 3" stroke="#21A121" stroke-width="2" fill="none"/></svg></div>
<span class="m a" style="left:774px;top:180px">Property:</span>
<div class="tb" style="left:870px;top:178px;width:76px;height:22px"><span class="m a" style="left:3px;top:5px">*</span></div>
<div class="cmb" style="left:958px;top:178px;width:52px;height:21px"><span class="m a" style="left:4px;top:4px">AND</span><div class="ar"><svg width="15" height="19"><path d="M4 7 L7.5 10.5 L11 7" stroke="#4D6185" stroke-width="2" fill="none"/></svg></div></div>
<span class="m a" style="left:774px;top:213px">Prop Value:</span>
<div class="tb" style="left:870px;top:211px;width:76px;height:22px"><span class="m a" style="left:3px;top:5px">10uF</span></div>
<div class="cmb" style="left:958px;top:211px;width:52px;height:21px"><span class="m a" style="left:4px;top:4px">AND</span><div class="ar"><svg width="15" height="19"><path d="M4 7 L7.5 10.5 L11 7" stroke="#4D6185" stroke-width="2" fill="none"/></svg></div></div>

<div class="cb" style="left:454px;top:258px"><svg width="11" height="11" style="position:absolute;left:0;top:0"><path d="M2.5 5.5 L4.5 7.5 L8.5 3" stroke="#21A121" stroke-width="2" fill="none"/></svg></div>
<span class="m a" style="left:471px;top:259px">Filter for View Only</span>

<!-- candidate objects -->
<div class="grp" style="left:455px;top:289px;width:567px;height:240px"></div>
<span class="m gt a" style="left:461px;top:283px">Candidate Objects</span>
<div class="a" style="left:462px;top:310px;width:533px;height:33px;background:#ECE9D8;border-top:2px solid #fff;border-bottom:2px solid #C7C5B2"></div>
<div class="a" style="left:462px;top:310px;width:2px;height:33px;background:#fff"></div>
<div class="a" style="left:523px;top:310px;width:2px;height:33px;background:#C7C5B2"></div>
<div class="a" style="left:525px;top:310px;width:2px;height:33px;background:#fff"></div>
<div class="a" style="left:836px;top:310px;width:2px;height:33px;background:#C7C5B2"></div>
<div class="a" style="left:838px;top:310px;width:2px;height:33px;background:#fff"></div>
<div class="a" style="left:993px;top:310px;width:2px;height:33px;background:#C7C5B2"></div>
<span class="m a" style="left:478px;top:313px">Type</span>
<span class="m a" style="left:637px;top:313px">Object Name</span>
<span class="m a" style="left:861px;top:313px">Property Value</span>

<div class="a" style="left:462px;top:345px;width:552px;height:138px;border:1px solid #000;background:#fff"></div>
<div class="a" style="left:463px;top:346px;width:533px;height:17px;background:#316AC5;border-bottom:1px solid #0A1E3C"></div>
<span class="m a rt" style="left:465px;top:349px">Comp</span><span class="m a rt" style="left:527px;top:349px">C568</span><span class="m a rt" style="left:841px;top:349px">10uF</span>
<div class="a" style="left:463px;top:363px;width:533px;height:17px;background:#316AC5;border-bottom:1px solid #0A1E3C"></div>
<span class="m a rt" style="left:465px;top:366px">Comp</span><span class="m a rt" style="left:527px;top:366px">C624</span><span class="m a rt" style="left:841px;top:366px">10uF</span>
<div class="a" style="left:463px;top:380px;width:533px;height:17px;background:#316AC5;border-bottom:1px solid #0A1E3C"></div>
<span class="m a rt" style="left:465px;top:383px">Comp</span><span class="m a rt" style="left:527px;top:383px">C79</span><span class="m a rt" style="left:841px;top:383px">10uF</span>
<div class="a" style="left:463px;top:397px;width:533px;height:17px;background:#316AC5;border-bottom:1px solid #0A1E3C"></div>
<span class="m a rt" style="left:465px;top:400px">Comp</span><span class="m a rt" style="left:527px;top:400px">C80</span><span class="m a rt" style="left:841px;top:400px">10uF</span>
<div class="a" style="left:463px;top:414px;width:533px;height:17px;background:#316AC5;border-bottom:1px solid #0A1E3C"></div>
<span class="m a rt" style="left:465px;top:417px">Comp</span><span class="m a rt" style="left:527px;top:417px">C81</span><span class="m a rt" style="left:841px;top:417px">10uF</span>
<div class="a" style="left:463px;top:431px;width:533px;height:17px;background:#316AC5;border-bottom:1px solid #0A1E3C"></div>
<span class="m a rt" style="left:465px;top:434px">Comp</span><span class="m a rt" style="left:527px;top:434px">C82</span><span class="m a rt" style="left:841px;top:434px">10uF</span>
<div class="a" style="left:463px;top:448px;width:533px;height:17px;background:#316AC5;border-bottom:1px solid #0A1E3C"></div>
<span class="m a rt" style="left:465px;top:451px">Comp</span><span class="m a rt" style="left:527px;top:451px">C83</span><span class="m a rt" style="left:841px;top:451px">10uF</span>
<div class="a" style="left:524px;top:346px;width:1px;height:119px;background:#0A1E3C"></div>
<div class="a" style="left:838px;top:346px;width:1px;height:119px;background:#0A1E3C"></div>
<!-- h scrollbar -->
<div class="a" style="left:463px;top:466px;width:533px;height:16px;background:linear-gradient(90deg,#FEFEFB,#F3F1EA)"></div>
<div class="a sbb" style="left:463px;top:466px;width:15px;height:15px"><svg width="15" height="15"><path d="M9 4 L5.5 7.5 L9 11" stroke="#4D6185" stroke-width="2" fill="none"/></svg></div>
<div class="a sbb" style="left:479px;top:466px;width:17px;height:15px"><svg width="17" height="15"><path d="M6 5v5M8 5v5M10 5v5M12 5v5" stroke="#A8BCEE" stroke-width="1"/></svg></div>
<div class="a sbb" style="left:980px;top:466px;width:15px;height:15px"><svg width="15" height="15"><path d="M6 4 L9.5 7.5 L6 11" stroke="#4D6185" stroke-width="2" fill="none"/></svg></div>
<!-- v scrollbar -->
<div class="a" style="left:996px;top:346px;width:17px;height:119px;background:linear-gradient(90deg,#F3F1EA,#FEFEFB)"></div>
<div class="a" style="left:996px;top:466px;width:17px;height:16px;background:#ECE9D8"></div>
<div class="a sbb" style="left:997px;top:347px;width:15px;height:15px"><svg width="15" height="15"><path d="M4 9 L7.5 5.5 L11 9" stroke="#4D6185" stroke-width="2" fill="none"/></svg></div>
<div class="a sbb" style="left:997px;top:432px;width:15px;height:14px"><svg width="15" height="14"><path d="M4 5h7M4 7h7M4 9h7" stroke="#A8BCEE" stroke-width="1"/></svg></div>
<div class="a sbb" style="left:997px;top:447px;width:15px;height:15px"><svg width="15" height="15"><path d="M4 6 L7.5 9.5 L11 6" stroke="#4D6185" stroke-width="2" fill="none"/></svg></div>

<span class="m a" style="left:463px;top:499px">17 Candidate Objects Found</span>
<div class="btn" style="left:911px;top:498px;width:90px;height:20px"><span class="m" style="top:4px">Config...</span></div>

<div class="btn" style="left:455px;top:553px;width:70px;height:20px;box-shadow:inset 0 0 0 1px #98B8EA, inset 0 -1px 0 1px #6F9EE4"><span class="m" style="top:4px">Close</span></div>
<div class="btn" style="left:535px;top:553px;width:70px;height:20px"><span class="m" style="top:4px">Cancel</span></div>
<div class="btn" style="left:615px;top:553px;width:98px;height:20px"><span class="m" style="top:4px">Save Query</span></div>
<div class="btn" style="left:727px;top:553px;width:98px;height:20px"><span class="m" style="top:4px">Load Query</span></div>
<div class="btn" style="left:839px;top:553px;width:70px;height:20px"><span class="m" style="top:4px">Reset</span></div>
<div class="btn" style="left:951px;top:553px;width:70px;height:20px"><span class="m" style="top:4px">Help</span></div>

<div id="panel"></div>
<div class="a" style="left:1043px;top:1px;width:13px;height:13px;border:1px solid #000;background:#FFFF80"></div>
<span class="s a" style="left:1063px;top:3px">Selected color</span>
<div class="sw" style="left:1050px;top:34px;background:#FFFFFF"><i></i><b></b></div>
<div class="sw" style="left:1071px;top:34px;background:#FF8080"><i></i><b></b></div>
<div class="sw" style="left:1092px;top:34px;background:#FF0000"><i></i><b></b></div>
<div class="sw" style="left:1113px;top:34px;background:#804040"><i></i><b></b></div>
<div class="sw" style="left:1134px;top:34px;background:#400000"><i></i><b></b></div>
<div class="sw" style="left:1155px;top:34px;background:#FFFF80"><i></i><b></b></div>
<div class="sw" style="left:1176px;top:34px;background:#A0A030"><i></i><b></b></div>
<div class="sw" style="left:1197px;top:34px;background:#FF8040"><i></i><b></b></div>
<div class="sw" style="left:1050px;top:67px;background:#A05000"><i></i><b></b></div>
<div class="sw" style="left:1071px;top:67px;background:#80FF80"><i></i><b></b></div>
<div class="sw" style="left:1092px;top:67px;background:#00FF00"><i></i><b></b></div>
<div class="sw" style="left:1113px;top:67px;background:#6F9070"><i></i><b></b></div>
<div class="sw" style="left:1134px;top:67px;background:#FFFF00"><i></i><b></b></div>
<div class="sw" style="left:1155px;top:67px;background:#008080"><i></i><b></b></div>
<div class="sw" style="left:1176px;top:67px;background:#00FFFF"><i></i><b></b></div>
<div class="sw" style="left:1197px;top:67px;background:#0000FF"><i></i><b></b></div>
<div class="sw" style="left:1050px;top:100px;background:#8080FF"><i></i><b></b></div>
<div class="sw" style="left:1071px;top:100px;background:#C0C0C0"><i></i><b></b></div>
<div class="sw" style="left:1092px;top:100px;background:#FF80C0"><i></i><b></b></div>
<div class="sw" style="left:1113px;top:100px;background:#FF0080"><i></i><b></b></div>
<div class="sw" style="left:1134px;top:100px;background:#808080"><i></i><b></b></div>
<div class="sw" style="left:1155px;top:100px;background:#800000"><i></i><b></b></div>
<div class="sw" style="left:1176px;top:100px;background:#8000FF"><i></i><b></b></div>
<div class="sw" style="left:1197px;top:100px;background:#80FFFF"><i></i><b></b></div>
<div class="sw" style="left:1050px;top:133px;background:#008000"><i></i><b></b></div>
<div class="sw" style="left:1071px;top:133px;background:#00A070"><i></i><b></b></div>
<div class="sw" style="left:1092px;top:133px;background:#00A0B0"><i></i><b></b></div>
<div class="sw" style="left:1113px;top:133px;background:#0070E0"><i></i><b></b></div>
<div class="sw" style="left:1134px;top:133px;background:#0000C0"><i></i><b></b></div>
<div class="sw" style="left:1155px;top:133px;background:#8000C0"><i></i><b></b></div>
<div class="sw" style="left:1176px;top:133px;background:#C000C0"><i></i><b></b></div>
<div class="sw" style="left:1197px;top:133px;background:#D00060"><i></i><b></b></div>
<svg class="a" style="left:1130px;top:0px" width="134" height="70" viewBox="0 0 134 70">
<path d="M20.5 14.3 H47 L57.4 24.6 H82" stroke="#1F5FA8" stroke-width="2" fill="none"/>
<path d="M31 22.6 H43.5 L53.7 33 H96.3 L100 29" stroke="#1F5FA8" stroke-width="2" fill="none"/>
<circle cx="17.2" cy="15.2" r="3.3" stroke="#F0A040" stroke-width="2.2" fill="none"/>
<circle cx="27.4" cy="23.5" r="3.3" stroke="#F0A040" stroke-width="2.2" fill="none"/>
<circle cx="86" cy="25.5" r="3.3" stroke="#F0A040" stroke-width="2.2" fill="none"/>
<circle cx="102.4" cy="25.5" r="3.3" stroke="#F0A040" stroke-width="2.2" fill="none"/>
<text x="7.5" y="64.8" font-family="Liberation Sans" font-size="28" fill="#1F5FA8" stroke="#1F5FA8" stroke-width="0.9" textLength="110" lengthAdjust="spacingAndGlyphs">EDA365</text>
</svg>
<div class="btn" style="left:1050px;top:164px;width:103px;height:20px"><span class="s" style="top:4px">More colors ...</span></div>
<span class="s a" style="left:1042px;top:213px">Hilight Pattern:</span>
<div class="cmb" style="left:1119px;top:207px;width:101px;height:21px"><span class="s a" style="left:3px;top:5px">Solid</span><div class="ar"><svg width="15" height="17"><path d="M4 6 L7.5 9.5 L11 6" stroke="#4D6185" stroke-width="2" fill="none"/></svg></div></div>
<svg class="a" style="left:1049px;top:240px" width="21" height="22"><rect width="21" height="22" fill="#ACA899"/><path d="M-2 20 L18 -2 M4 24 L24 2" stroke="#F4F3EE" stroke-width="3"/><path d="M0 21.5H21M20.5 0V22" stroke="#908C7C" stroke-width="1"/></svg>
<span class="s a" style="left:1077px;top:246px">Selected pattern</span>
<svg class="a" style="left:1077px;top:273px" width="21" height="22"><rect width="21" height="22" fill="#ECE9D8"/><svg x="1" y="1" width="18.5" height="19.5" viewBox="1 1 18.5 19.5"><path d="M-2 13 L13 -2 M5 21 L21 5" stroke="#000" stroke-width="4.5"/><path d="M-2 4 L4 -2" stroke="#000" stroke-width="3"/></svg><path d="M0 0.5H20M0.5 0V21" stroke="#fff"/><path d="M0 21.5H21M20.5 0V22" stroke="#716F64"/><path d="M1 20.5H20M19.5 1V21" stroke="#ACA899"/></svg>
<svg class="a" style="left:1105px;top:273px" width="21" height="22"><rect width="21" height="22" fill="#ECE9D8"/><svg x="1" y="1" width="18.5" height="19.5" viewBox="1 1 18.5 19.5"><path d="M2 2 L19 19 M2 10 L11 19 M10 2 L19 11" stroke="#000" stroke-width="1"/></svg><path d="M0 0.5H20M0.5 0V21" stroke="#fff"/><path d="M0 21.5H21M20.5 0V22" stroke="#716F64"/><path d="M1 20.5H20M19.5 1V21" stroke="#ACA899"/></svg>
<svg class="a" style="left:1133px;top:273px" width="21" height="22"><rect width="21" height="22" fill="#ECE9D8"/><svg x="1" y="1" width="18.5" height="19.5" viewBox="1 1 18.5 19.5"><path d="M19 2 L2 19 M11 2 L2 11 M19 10 L10 19" stroke="#000" stroke-width="1"/></svg><path d="M0 0.5H20M0.5 0V21" stroke="#fff"/><path d="M0 21.5H21M20.5 0V22" stroke="#716F64"/><path d="M1 20.5H20M19.5 1V21" stroke="#ACA899"/></svg>
<svg class="a" style="left:1161px;top:273px" width="21" height="22"><rect width="21" height="22" fill="#ECE9D8"/><svg x="1" y="1" width="18.5" height="19.5" viewBox="1 1 18.5 19.5"><path d="M2 3.5H19M2 7.5H19M2 11.5H19M2 15.5H19M2 18.5H19" stroke="#000" stroke-width="1"/></svg><path d="M0 0.5H20M0.5 0V21" stroke="#fff"/><path d="M0 21.5H21M20.5 0V22" stroke="#716F64"/><path d="M1 20.5H20M19.5 1V21" stroke="#ACA899"/></svg>
<svg class="a" style="left:1077px;top:306px" width="21" height="22"><rect width="21" height="22" fill="#ECE9D8"/><svg x="1" y="1" width="18.5" height="19.5" viewBox="1 1 18.5 19.5"><path d="M3.5 3V19M7.5 3V19M11.5 3V19M15.5 3V19" stroke="#000" stroke-width="1"/></svg><path d="M0 0.5H20M0.5 0V21" stroke="#fff"/><path d="M0 21.5H21M20.5 0V22" stroke="#716F64"/><path d="M1 20.5H20M19.5 1V21" stroke="#ACA899"/></svg>
<svg class="a" style="left:1105px;top:306px" width="21" height="22"><rect width="21" height="22" fill="#ECE9D8"/><svg x="1" y="1" width="18.5" height="19.5" viewBox="1 1 18.5 19.5"><path d="M4 7L6 4L8 7Z M12 14L14 11L16 14Z" fill="#000"/><rect x="5" y="17" width="1" height="1"/></svg><path d="M0 0.5H20M0.5 0V21" stroke="#fff"/><path d="M0 21.5H21M20.5 0V22" stroke="#716F64"/><path d="M1 20.5H20M19.5 1V21" stroke="#ACA899"/></svg>
<svg class="a" style="left:1133px;top:306px" width="21" height="22"><rect width="21" height="22" fill="#ECE9D8"/><svg x="1" y="1" width="18.5" height="19.5" viewBox="1 1 18.5 19.5"><path d="M13.5 5V11M10.5 8H16.5M5.5 13V19M2.5 16H8.5" stroke="#000" stroke-width="1"/><rect x="5" y="9" width="1" height="1"/></svg><path d="M0 0.5H20M0.5 0V21" stroke="#fff"/><path d="M0 21.5H21M20.5 0V22" stroke="#716F64"/><path d="M1 20.5H20M19.5 1V21" stroke="#ACA899"/></svg>
<svg class="a" style="left:1161px;top:306px" width="21" height="22"><rect width="21" height="22" fill="#ECE9D8"/><svg x="1" y="1" width="18.5" height="19.5" viewBox="1 1 18.5 19.5"><path d="M3 4H4M14 5H18M3 9H4M8 10H11M14 12H18M3 15H4M8 16H11" stroke="#000" stroke-width="1"/></svg><path d="M0 0.5H20M0.5 0V21" stroke="#fff"/><path d="M0 21.5H21M20.5 0V22" stroke="#716F64"/><path d="M1 20.5H20M19.5 1V21" stroke="#ACA899"/></svg>
<svg class="a" style="left:1077px;top:339px" width="21" height="22"><rect width="21" height="22" fill="#ECE9D8"/><svg x="1" y="1" width="18.5" height="19.5" viewBox="1 1 18.5 19.5"><path d="M4.5 6V9M12.5 6V9M8.5 14V18M16.5 14V18" stroke="#000" stroke-width="1"/><rect x="8" y="2" width="1" height="1"/><rect x="16" y="2" width="1" height="1"/></svg><path d="M0 0.5H20M0.5 0V21" stroke="#fff"/><path d="M0 21.5H21M20.5 0V22" stroke="#716F64"/><path d="M1 20.5H20M19.5 1V21" stroke="#ACA899"/></svg>
<svg class="a" style="left:1105px;top:339px" width="21" height="22"><rect width="21" height="22" fill="#ECE9D8"/><svg x="1" y="1" width="18.5" height="19.5" viewBox="1 1 18.5 19.5"><path d="M2 6L15 19M2 14L15 1M6 2L19 15M6 19L19 6M2 2L6 6M14 2L19 7" stroke="#000" stroke-width="1"/></svg><path d="M0 0.5H20M0.5 0V21" stroke="#fff"/><path d="M0 21.5H21M20.5 0V22" stroke="#716F64"/><path d="M1 20.5H20M19.5 1V21" stroke="#ACA899"/></svg>
<svg class="a" style="left:1133px;top:339px" width="21" height="22"><rect width="21" height="22" fill="#ECE9D8"/><svg x="1" y="1" width="18.5" height="19.5" viewBox="1 1 18.5 19.5"><path d="M2 2.5H19M2 6.5H19M2 10.5H19M2 14.5H19M2 18.5H19M2.5 2V19M6.5 2V19M10.5 2V19M14.5 2V19M18.5 2V19" stroke="#000" stroke-width="1.2"/></svg><path d="M0 0.5H20M0.5 0V21" stroke="#fff"/><path d="M0 21.5H21M20.5 0V22" stroke="#716F64"/><path d="M1 20.5H20M19.5 1V21" stroke="#ACA899"/></svg>
<svg class="a" style="left:1161px;top:339px" width="21" height="22"><rect width="21" height="22" fill="#ECE9D8"/><svg x="1" y="1" width="18.5" height="19.5" viewBox="1 1 18.5 19.5"><g fill="#000"><path d="M4 1l2 2-2 2-2-2z M12 1l2 2-2 2-2-2z M20 1l2 2-2 2-2-2z M8 5l2 2-2 2-2-2z M16 5l2 2-2 2-2-2z M4 9l2 2-2 2-2-2z M12 9l2 2-2 2-2-2z M20 9l2 2-2 2-2-2z M8 13l2 2-2 2-2-2z M16 13l2 2-2 2-2-2z M4 17l2 2-2 2-2-2z M12 17l2 2-2 2-2-2z M20 17l2 2-2 2-2-2z"/></g></svg><path d="M0 0.5H20M0.5 0V21" stroke="#fff"/><path d="M0 21.5H21M20.5 0V22" stroke="#716F64"/><path d="M1 20.5H20M19.5 1V21" stroke="#ACA899"/></svg>
<svg class="a" style="left:1077px;top:372px" width="21" height="22"><rect width="21" height="22" fill="#ECE9D8"/><svg x="1" y="1" width="18.5" height="19.5" viewBox="1 1 18.5 19.5"><g fill="none" stroke="#000" stroke-width="1"><circle cx="6.5" cy="6.5" r="1.5"/><circle cx="14.5" cy="6.5" r="1.5"/><circle cx="10.5" cy="10.5" r="1.5"/><circle cx="2.5" cy="10.5" r="1.5"/><circle cx="18.5" cy="10.5" r="1.5"/><circle cx="6.5" cy="14.5" r="1.5"/><circle cx="14.5" cy="14.5" r="1.5"/><circle cx="10.5" cy="2.5" r="1.5"/><circle cx="10.5" cy="18.5" r="1.5"/><circle cx="2.5" cy="2.5" r="1.5"/><circle cx="18.5" cy="2.5" r="1.5"/><circle cx="2.5" cy="18.5" r="1.5"/><circle cx="18.5" cy="18.5" r="1.5"/></g></svg><path d="M0 0.5H20M0.5 0V21" stroke="#fff"/><path d="M0 21.5H21M20.5 0V22" stroke="#716F64"/><path d="M1 20.5H20M19.5 1V21" stroke="#ACA899"/></svg>
<svg class="a" style="left:1105px;top:372px" width="21" height="22"><rect width="21" height="22" fill="#ECE9D8"/><svg x="1" y="1" width="18.5" height="19.5" viewBox="1 1 18.5 19.5"><path d="M10.5 2L19 10.5L10.5 19L2 10.5Z" stroke="#000" stroke-width="1" fill="none"/></svg><path d="M0 0.5H20M0.5 0V21" stroke="#fff"/><path d="M0 21.5H21M20.5 0V22" stroke="#716F64"/><path d="M1 20.5H20M19.5 1V21" stroke="#ACA899"/></svg>
<svg class="a" style="left:1133px;top:372px" width="21" height="22"><rect width="21" height="22" fill="#ECE9D8"/><svg x="1" y="1" width="18.5" height="19.5" viewBox="1 1 18.5 19.5"><path d="M2 2L19 19M2 10L6 6L10 2M10 19L19 10" stroke="#000" stroke-width="1.5" stroke-dasharray="2 1.5"/></svg><path d="M0 0.5H20M0.5 0V21" stroke="#fff"/><path d="M0 21.5H21M20.5 0V22" stroke="#716F64"/><path d="M1 20.5H20M19.5 1V21" stroke="#ACA899"/></svg>
<svg class="a" style="left:1161px;top:372px" width="21" height="22"><rect width="21" height="22" fill="#ECE9D8"/><svg x="1" y="1" width="18.5" height="19.5" viewBox="1 1 18.5 19.5"><rect x="0" y="0" width="21" height="21" fill="#000"/><path fill="#ECE9D8" d="M6.5 3L10.5 7L6.5 11L2.5 7Z M14.5 3L18.5 7L14.5 11L10.5 7Z M6.5 11L10.5 15L6.5 19L2.5 15Z M14.5 11L18.5 15L14.5 19L10.5 15Z"/></svg><path d="M0 0.5H20M0.5 0V21" stroke="#fff"/><path d="M0 21.5H21M20.5 0V22" stroke="#716F64"/><path d="M1 20.5H20M19.5 1V21" stroke="#ACA899"/></svg>
<div class="a" style="left:1034px;top:409px;width:230px;height:1px;background:#918E7E"></div>
<div class="a" style="left:1034px;top:410px;width:230px;height:17px;background:linear-gradient(#EDEDEA,#D8D8D3 60%,#C2C1BA)"></div>
<div class="a" style="left:1037px;top:413px;width:3px;height:3px;background:#4A6BA8"></div><div class="a" style="left:1037px;top:418px;width:3px;height:3px;background:#4A6BA8"></div>
<span class="s a" style="left:1044px;top:411px">Find</span>
<svg class="a" style="left:1226px;top:410px" width="38" height="16"><path d="M6.5 6v4.5M9.5 6v4.5M6.5 6.5h3M5 10.5h6M8 10.5v3" stroke="#000" fill="none" stroke-width="1.3"/><path d="M22 9.5L24.5 6.5L27 9.5Z" fill="#000"/><path d="M34 5L39 10M39 5L34 10" stroke="#000" stroke-width="1.8"/></svg>
<div class="grp" style="left:1042px;top:441px;width:189px;height:229px"></div>
<span class="s a sgt" style="left:1051px;top:435px">Design Object Find Filter</span>
<div class="btn" style="left:1050px;top:453px;width:43px;height:15px"><span class="s" style="top:2px">All On</span></div>
<div class="btn" style="left:1106px;top:453px;width:47px;height:15px;box-shadow:inset 0 0 0 1px #98B8EA, inset 0 -1px 0 1px #6F9EE4"><span class="s" style="top:2px">All Off</span></div>
<div class="cb" style="left:1049px;top:475px;"></div>
<span class="s a" style="left:1065px;top:477px;">Groups</span>
<div class="cb" style="left:1133px;top:475px;border-color:#CAC8BB;background:#fff"></div>
<span class="s a" style="left:1149px;top:477px;color:#ACA899">Shapes</span>
<div class="cb" style="left:1049px;top:497px;border-color:#CAC8BB;background:#fff"></div>
<span class="s a" style="left:1065px;top:499px;color:#ACA899">Comps</span>
<div class="cb" style="left:1133px;top:497px;border-color:#CAC8BB;background:#fff"></div>
<span class="s a" style="left:1149px;top:499px;color:#ACA899">Voids/Cavities</span>
<div class="cb" style="left:1049px;top:519px;"><svg width="11" height="11" style="position:absolute;left:0;top:0"><path d="M2.5 5.5 L4.5 7.5 L8.5 3" stroke="#21A121" stroke-width="2" fill="none"/></svg></div>
<span class="s a" style="left:1065px;top:521px;">Symbols</span>
<div class="cb" style="left:1133px;top:519px;border-color:#CAC8BB;background:#fff"></div>
<span class="s a" style="left:1149px;top:521px;color:#ACA899">Cline segs</span>
<div class="cb" style="left:1049px;top:541px;"></div>
<span class="s a" style="left:1065px;top:543px;">Functions</span>
<div class="cb" style="left:1133px;top:541px;border-color:#CAC8BB;background:#fff"></div>
<span class="s a" style="left:1149px;top:543px;color:#ACA899">Other segs</span>
<div class="cb" style="left:1049px;top:563px;"></div>
<span class="s a" style="left:1065px;top:565px;">Nets</span>
<div class="cb" style="left:1133px;top:563px;border-color:#CAC8BB;background:#fff"></div>
<span class="s a" style="left:1149px;top:565px;color:#ACA899">Figures</span>
<div class="cb" style="left:1049px;top:585px;"></div>
<span class="s a" style="left:1065px;top:587px;">Pins</span>
<div class="cb" style="left:1133px;top:585px;"></div>
<span class="s a" style="left:1149px;top:587px;">DRC errors</span>
<div class="cb" style="left:1049px;top:607px;"></div>
<span class="s a" style="left:1065px;top:609px;">Vias</span>
<div class="cb" style="left:1133px;top:607px;border-color:#CAC8BB;background:#fff"></div>
<span class="s a" style="left:1149px;top:609px;color:#ACA899">Text</span>
<div class="cb" style="left:1049px;top:629px;border-color:#CAC8BB;background:#fff"></div>
<span class="s a" style="left:1065px;top:631px;color:#ACA899">Clines</span>
<div class="cb" style="left:1133px;top:629px;border-color:#CAC8BB;background:#fff"></div>
<span class="s a" style="left:1149px;top:631px;color:#ACA899">Ratsnests</span>
<div class="cb" style="left:1049px;top:651px;border-color:#CAC8BB;background:#fff"></div>
<span class="s a" style="left:1065px;top:653px;color:#ACA899">Lines</span>
<div class="cb" style="left:1133px;top:651px;border-color:#CAC8BB;background:#fff"></div>
<span class="s a" style="left:1149px;top:653px;color:#ACA899">Rat Ts</span>
<div class="grp" style="left:1042px;top:682px;width:189px;height:65px"></div>
<span class="s a sgt" style="left:1050px;top:677px">Find By Name</span>
<div class="cmb" style="left:1049px;top:692px;width:122px;height:21px"><span class="s a" style="left:3px;top:5px">Property</span><div class="ar"><svg width="15" height="17"><path d="M4 6 L7.5 9.5 L11 6" stroke="#4D6185" stroke-width="2" fill="none"/></svg></div></div>
<div class="cmb" style="left:1175px;top:692px;width:52px;height:21px"><span class="s a" style="left:3px;top:5px">Name</span><div class="ar"><svg width="15" height="17"><path d="M4 6 L7.5 9.5 L11 6" stroke="#4D6185" stroke-width="2" fill="none"/></svg></div></div>
<svg class="a" style="left:1049px;top:720px" width="8" height="10"><path d="M2 1.5L6 5L2 8.5" stroke="#000" stroke-width="1" fill="none"/></svg>
<div class="tb" style="left:1063px;top:714px;width:108px;height:22px;border-color:#A5ACB2;box-shadow:inset 1px 1px 0 #716F64"></div>
<div class="btn" style="left:1176px;top:718px;width:48px;height:19px;box-shadow:inset 0 0 0 1px #98B8EA, inset 0 -1px 0 1px #6F9EE4"><span class="s" style="top:4px">More...</span></div>
<div class="btn" style="left:1043px;top:761px;width:89px;height:20px;box-shadow:inset 0 0 0 1px #98B8EA, inset 0 -1px 0 1px #6F9EE4"><span class="s" style="top:4px">Find by Query...</span></div>
</body></html>
